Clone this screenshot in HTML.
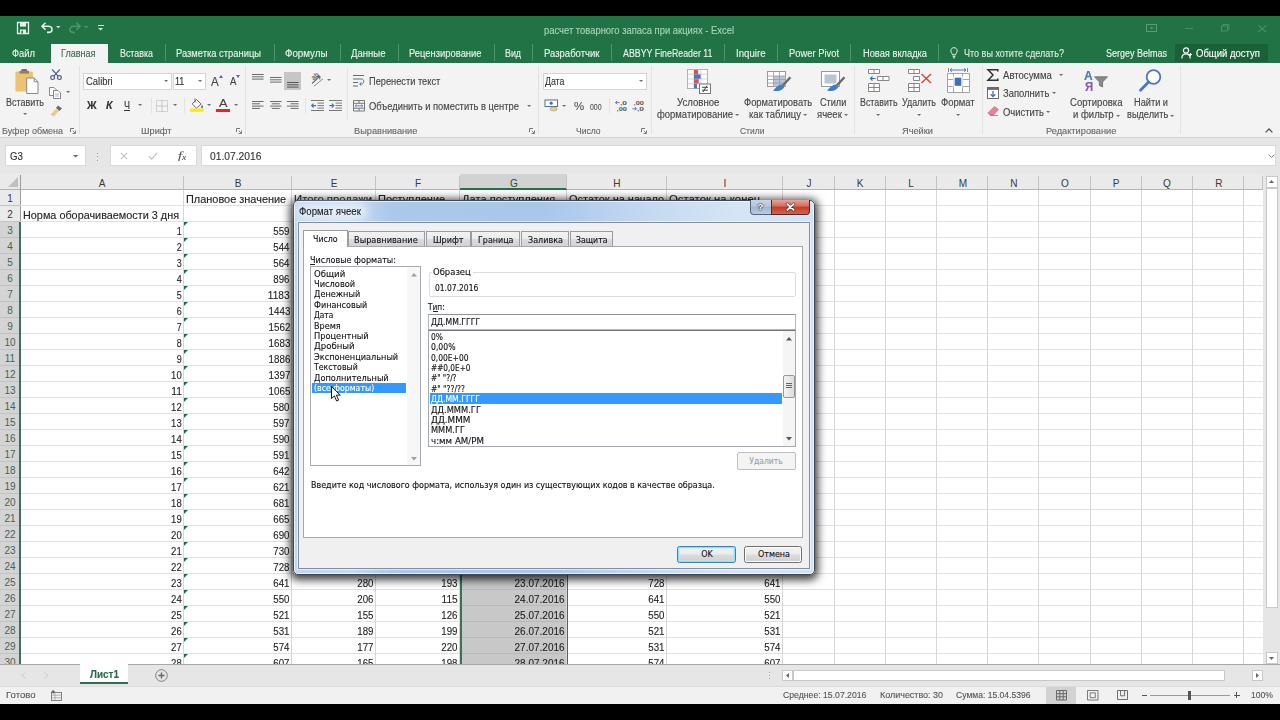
<!DOCTYPE html>
<html lang="ru"><head><meta charset="utf-8"><title>Excel</title>
<style>
*{box-sizing:border-box;margin:0;padding:0}
html,body{width:1280px;height:720px;overflow:hidden;background:#000}
body{font-family:"Liberation Sans",sans-serif;position:relative}
.a{position:absolute}
.t{position:absolute;white-space:nowrap;display:block;-webkit-text-stroke:.12px currentColor}
svg{position:absolute;overflow:visible}
</style></head>
<body>
<div class="a" style="left:0px;top:16px;width:1280px;height:47px;background:#217346"></div>
<svg style="left:17px;top:22px;" width="12" height="12" viewBox="0 0 12 12"><path d="M0.5 0.5H11.5V11.5H0.5Z" fill="none" stroke="#e4f0e8" stroke-width="1.3"/><rect x="3" y="1" width="6" height="3.6" fill="#e4f0e8"/><rect x="3" y="7.5" width="6" height="4" fill="#e4f0e8"/><rect x="4.4" y="8.8" width="1.6" height="2.6" fill="#217346"/></svg>
<svg style="left:41px;top:22px;" width="12" height="11" viewBox="0 0 12 11"><path d="M4.5 0.8L1 4.2L4.5 7.6M1.2 4.2H7.2C9.6 4.2 11 5.6 11 7.4C11 9.3 9.6 10.4 7.6 10.4H6" fill="none" stroke="#e4f0e8" stroke-width="1.6"/></svg>
<svg style="left:56.3px;top:26.4px;" width="4.4" height="2.2" viewBox="0 0 4.4 2.2"><path d="M0 0H4.4L2.2 2.2Z" fill="#d5e6da"/></svg>
<svg style="left:69px;top:22px;" width="12" height="11" viewBox="0 0 12 11"><path d="M7.5 0.8L11 4.2L7.5 7.6M10.8 4.2H4.8C2.4 4.2 1 5.6 1 7.4C1 9.3 2.4 10.4 4.4 10.4H6" fill="none" stroke="#4f9470" stroke-width="1.5"/></svg>
<svg style="left:83.8px;top:26.4px;" width="4.4" height="2.2" viewBox="0 0 4.4 2.2"><path d="M0 0H4.4L2.2 2.2Z" fill="#4f9470"/></svg>
<div class="a" style="left:98px;top:25px;width:6px;height:1px;background:#d5e6da"></div>
<svg style="left:98.4px;top:28.2px;" width="5.2" height="2.6" viewBox="0 0 5.2 2.6"><path d="M0 0H5.2L2.6 2.6Z" fill="#d5e6da"/></svg>
<span class="t" style="font-size:10px;color:#a9d3ba;line-height:14px;top:23.5px;left:544px;transform-origin:0 50%;transform:scaleX(0.9414);">расчет товарного запаса при акциях - Excel</span>
<svg style="left:1145.5px;top:24px;" width="11" height="8" viewBox="0 0 11 8"><rect x="0.5" y="0.5" width="10" height="7" fill="none" stroke="#5a9a78"/><path d="M5.5 2.6L7.4 4.8H3.6Z" fill="#5a9a78"/></svg>
<div class="a" style="left:1184.5px;top:28px;width:8px;height:1px;background:#4a8c69"></div>
<svg style="left:1221px;top:24px;" width="8.5" height="7.5" viewBox="0 0 8.5 7.5"><rect x="0.5" y="2" width="6" height="5" fill="none" stroke="#4b8d6a"/><path d="M2 2V0.5H8V5.5H6.5" fill="none" stroke="#4b8d6a"/></svg>
<svg style="left:1257.5px;top:24.5px;" width="8.5" height="7.5" viewBox="0 0 8.5 7.5"><path d="M0.5 0.5L8 7M8 0.5L0.5 7" stroke="#4b8d6a" stroke-width="1.1"/></svg>
<div class="a" style="left:50.5px;top:44px;width:57.5px;height:19px;background:#f3f3f3"></div>
<span class="t" style="font-size:10px;color:#e9f3ec;line-height:14px;top:47.0px;left:12px;transform-origin:0 50%;transform:scaleX(0.9352);">Файл</span>
<span class="t" style="font-size:10px;color:#3c6b52;line-height:14px;top:47.0px;left:61px;transform-origin:0 50%;transform:scaleX(0.9064);">Главная</span>
<span class="t" style="font-size:10px;color:#e9f3ec;line-height:14px;top:47.0px;left:119.5px;transform-origin:0 50%;transform:scaleX(0.8878);">Вставка</span>
<span class="t" style="font-size:10px;color:#e9f3ec;line-height:14px;top:47.0px;left:176px;transform-origin:0 50%;transform:scaleX(0.9370);">Разметка страницы</span>
<span class="t" style="font-size:10px;color:#e9f3ec;line-height:14px;top:47.0px;left:285px;transform-origin:0 50%;transform:scaleX(0.9767);">Формулы</span>
<span class="t" style="font-size:10px;color:#e9f3ec;line-height:14px;top:47.0px;left:351px;transform-origin:0 50%;transform:scaleX(0.9546);">Данные</span>
<span class="t" style="font-size:10px;color:#e9f3ec;line-height:14px;top:47.0px;left:409px;transform-origin:0 50%;transform:scaleX(0.9389);">Рецензирование</span>
<span class="t" style="font-size:10px;color:#e9f3ec;line-height:14px;top:47.0px;left:505px;transform-origin:0 50%;transform:scaleX(0.8843);">Вид</span>
<span class="t" style="font-size:10px;color:#e9f3ec;line-height:14px;top:47.0px;left:544px;transform-origin:0 50%;transform:scaleX(0.9515);">Разработчик</span>
<span class="t" style="font-size:10px;color:#e9f3ec;line-height:14px;top:47.0px;left:622.5px;transform-origin:0 50%;transform:scaleX(0.8830);">ABBYY FineReader 11</span>
<span class="t" style="font-size:10px;color:#e9f3ec;line-height:14px;top:47.0px;left:736px;transform-origin:0 50%;transform:scaleX(0.9647);">Inquire</span>
<span class="t" style="font-size:10px;color:#e9f3ec;line-height:14px;top:47.0px;left:789px;transform-origin:0 50%;transform:scaleX(0.9370);">Power Pivot</span>
<span class="t" style="font-size:10px;color:#e9f3ec;line-height:14px;top:47.0px;left:862.5px;transform-origin:0 50%;transform:scaleX(0.9284);">Новая вкладка</span>
<div class="a" style="left:165px;top:44px;width:1px;height:17px;background:#4f9470"></div>
<div class="a" style="left:273.5px;top:44px;width:1px;height:17px;background:#4f9470"></div>
<div class="a" style="left:340px;top:44px;width:1px;height:17px;background:#4f9470"></div>
<div class="a" style="left:397.5px;top:44px;width:1px;height:17px;background:#4f9470"></div>
<div class="a" style="left:493.5px;top:44px;width:1px;height:17px;background:#4f9470"></div>
<div class="a" style="left:531.5px;top:44px;width:1px;height:17px;background:#4f9470"></div>
<div class="a" style="left:611px;top:44px;width:1px;height:17px;background:#4f9470"></div>
<div class="a" style="left:724px;top:44px;width:1px;height:17px;background:#4f9470"></div>
<div class="a" style="left:776.5px;top:44px;width:1px;height:17px;background:#4f9470"></div>
<div class="a" style="left:850px;top:44px;width:1px;height:17px;background:#4f9470"></div>
<div class="a" style="left:938px;top:44px;width:1px;height:17px;background:#4f9470"></div>
<svg style="left:950px;top:47px;" width="8" height="12" viewBox="0 0 8 12"><path d="M4 0.7C1.9 0.7 0.8 2.2 0.8 3.8C0.8 5.4 2.2 6.2 2.4 7.8H5.6C5.8 6.2 7.2 5.4 7.2 3.8C7.2 2.2 6.1 0.7 4 0.7Z" fill="none" stroke="#e9f3ec" stroke-width="1"/><path d="M2.6 9.3H5.4M3 10.8H5" stroke="#e9f3ec" stroke-width="1"/></svg>
<span class="t" style="font-size:10px;color:#dbeade;line-height:14px;top:46.5px;left:964px;transform-origin:0 50%;transform:scaleX(0.9046);">Что вы хотите сделать?</span>
<span class="t" style="font-size:10px;color:#eef6f0;line-height:14px;top:46.5px;left:1106px;transform-origin:0 50%;transform:scaleX(0.8995);">Sergey Belmas</span>
<div class="a" style="left:1175px;top:44px;width:93px;height:18px;background:#1a6039"></div>
<svg style="left:1181px;top:47px;" width="11" height="12" viewBox="0 0 11 12"><circle cx="5" cy="3.4" r="2.6" fill="none" stroke="#fff" stroke-width="1.2"/><path d="M0.8 11.5C0.8 8.4 2.6 6.8 5 6.8C7.4 6.8 9.2 8.4 9.2 11.5" fill="none" stroke="#fff" stroke-width="1.2"/><path d="M8 7.5H11M9.5 6V9" stroke="#fff" stroke-width="1"/></svg>
<span class="t" style="font-size:10px;color:#fff;line-height:14px;top:46.5px;left:1196px;transform-origin:0 50%;transform:scaleX(0.9526);">Общий доступ</span>
<div class="a" style="left:0px;top:63px;width:1280px;height:74px;background:#f3f3f3"></div>
<div class="a" style="left:0px;top:137px;width:1280px;height:1px;background:#d2d2d2"></div>
<div class="a" style="left:79px;top:66px;width:1px;height:68px;background:#e2e2e2"></div>
<div class="a" style="left:244.5px;top:66px;width:1px;height:68px;background:#e2e2e2"></div>
<div class="a" style="left:537.5px;top:66px;width:1px;height:68px;background:#e2e2e2"></div>
<div class="a" style="left:650.5px;top:66px;width:1px;height:68px;background:#e2e2e2"></div>
<div class="a" style="left:853.5px;top:66px;width:1px;height:68px;background:#e2e2e2"></div>
<div class="a" style="left:981.5px;top:66px;width:1px;height:68px;background:#e2e2e2"></div>
<div class="a" style="left:1180px;top:66px;width:1px;height:68px;background:#e2e2e2"></div>
<div class="a" style="left:347px;top:68px;width:1px;height:52px;background:#e2e2e2"></div>
<div class="a" style="left:150.5px;top:98px;width:1px;height:15px;background:#e2e2e2"></div>
<div class="a" style="left:184px;top:98px;width:1px;height:15px;background:#e2e2e2"></div>
<div class="a" style="left:305px;top:98px;width:1px;height:15px;background:#e2e2e2"></div>
<div class="a" style="left:608.5px;top:98px;width:1px;height:15px;background:#e2e2e2"></div>
<svg style="left:15px;top:69px;" width="24" height="25" viewBox="0 0 24 25"><rect x="0.4" y="2.6" width="17.6" height="20" rx="1" fill="#ecc373"/><rect x="6.2" y="0" width="6" height="3" rx="1.2" fill="#7a705e"/><rect x="4.4" y="1.8" width="9.6" height="2.8" fill="#8f8268"/>
<path d="M11.7 9H19.2L23 12.8V24.5H11.7Z" fill="#fff" stroke="#7d7d7d" stroke-width="0.9"/><path d="M19.2 9V12.8H23" fill="none" stroke="#7d7d7d" stroke-width="0.9"/></svg>
<span class="t" style="font-size:10px;color:#444;line-height:14px;top:95.7px;left:5.7px;transform-origin:0 50%;transform:scaleX(0.8964);">Вставить</span>
<svg style="left:22.9px;top:113.45px;" width="4.2" height="2.1" viewBox="0 0 4.2 2.1"><path d="M0 0H4.2L2.1 2.1Z" fill="#707070"/></svg>
<svg style="left:49.5px;top:69px;" width="12" height="11" viewBox="0 0 12 11"><path d="M2.2 0.5L8 7.2M9.8 0.5L4 7.2" stroke="#55618f" stroke-width="1.2" fill="none"/><circle cx="2.6" cy="8.6" r="1.9" fill="none" stroke="#55618f" stroke-width="1.2"/><circle cx="9.4" cy="8.6" r="1.9" fill="none" stroke="#55618f" stroke-width="1.2"/></svg>
<svg style="left:49px;top:87px;" width="12" height="12" viewBox="0 0 12 12"><path d="M0.5 0.5H5L7 2.5V8.5H0.5Z" fill="#fff" stroke="#7a7a7a" stroke-width="0.9"/><path d="M4.5 3.5H9L11.5 6V11.5H4.5Z" fill="#fff" stroke="#7a7a7a" stroke-width="0.9"/><path d="M6 7H10M6 9H10" stroke="#8fa3c8" stroke-width="0.8"/></svg>
<svg style="left:66.4px;top:91.45px;" width="4.2" height="2.1" viewBox="0 0 4.2 2.1"><path d="M0 0H4.2L2.1 2.1Z" fill="#707070"/></svg>
<svg style="left:50px;top:105px;" width="13" height="12" viewBox="0 0 13 12"><path d="M8 0.5L12 3.5L9.5 6L6 3Z" fill="#6b6b6b"/><path d="M6.5 3.5L9 5.8L4 11.5L0.5 9.5Z" fill="#e9c98c"/></svg>
<span class="t" style="font-size:9.5px;color:#666;line-height:14px;top:123.7px;left:2.4px;transform-origin:0 50%;transform:scaleX(0.9448);">Буфер обмена</span>
<svg style="left:70px;top:128px;" width="6" height="6" viewBox="0 0 6 6"><path d="M0.5 4V0.5H4" fill="none" stroke="#777"/><path d="M5.5 2.5V5.5H2.5M5.5 5.5L2.8 2.8" fill="none" stroke="#777" stroke-width="0.9"/></svg>
<div class="a" style="left:83.3px;top:72.6px;width:88.4px;height:17px;background:#fff;border:1px solid #d4d4d4"></div>
<div class="a" style="left:172.8px;top:72.6px;width:33.5px;height:17px;background:#fff;border:1px solid #d4d4d4"></div>
<span class="t" style="font-size:10.5px;color:#333;line-height:14px;top:74.3px;left:85.7px;transform-origin:0 50%;transform:scaleX(0.8970);">Calibri</span>
<svg style="left:163.9px;top:80.45px;" width="4.2" height="2.1" viewBox="0 0 4.2 2.1"><path d="M0 0H4.2L2.1 2.1Z" fill="#707070"/></svg>
<span class="t" style="font-size:10.5px;color:#333;line-height:14px;top:74.3px;left:174.7px;transform-origin:0 50%;transform:scaleX(0.8527);">11</span>
<svg style="left:197.9px;top:80.45px;" width="4.2" height="2.1" viewBox="0 0 4.2 2.1"><path d="M0 0H4.2L2.1 2.1Z" fill="#707070"/></svg>
<span class="t" style="font-size:12px;color:#444;line-height:16px;top:73.6px;left:211.3px;transform-origin:0 50%;transform:scaleX(0.9606);">A</span>
<svg style="left:218.5px;top:74.5px;" width="4" height="3" viewBox="0 0 4 3"><path d="M0 3L2 0L4 3Z" fill="#4a69a8"/></svg>
<span class="t" style="font-size:10px;color:#444;line-height:14px;top:75.2px;left:229.6px;transform-origin:0 50%;transform:scaleX(0.9593);">A</span>
<svg style="left:235.5px;top:75px;" width="4" height="3" viewBox="0 0 4 3"><path d="M0 0L2 3L4 0Z" fill="#4a69a8"/></svg>
<span class="t" style="font-size:10.5px;color:#333;font-weight:bold;line-height:14px;top:98.0px;left:87.4px;transform-origin:0 50%;transform:scaleX(1.0105);">Ж</span>
<span class="t" style="font-size:10.5px;color:#333;font-weight:bold;font-style:italic;line-height:14px;top:98.0px;left:105.7px;transform-origin:0 50%;transform:scaleX(1.0048);">К</span>
<span class="t" style="font-size:10.5px;color:#333;text-decoration:underline;line-height:14px;top:97.6px;left:124px;transform-origin:0 50%;transform:scaleX(0.8571);">Ч</span>
<svg style="left:137.9px;top:104.45px;" width="4.2" height="2.1" viewBox="0 0 4.2 2.1"><path d="M0 0H4.2L2.1 2.1Z" fill="#707070"/></svg>
<svg style="left:155.5px;top:99.5px;" width="12" height="12" viewBox="0 0 12 12"><path d="M0.5 0.5H11.5V11.5H0.5Z" fill="none" stroke="#b5b5b5" stroke-dasharray="1 1"/><path d="M6 0.5V11.5M0.5 6H11.5" stroke="#9a9a9a" stroke-width="0.9" stroke-dasharray="1 1"/></svg>
<svg style="left:172.9px;top:104.45px;" width="4.2" height="2.1" viewBox="0 0 4.2 2.1"><path d="M0 0H4.2L2.1 2.1Z" fill="#707070"/></svg>
<svg style="left:190px;top:98px;" width="14" height="14" viewBox="0 0 14 14"><path d="M6.5 1.5L11 6L6.5 10.2L2.2 6Z" fill="#fdfdfd" stroke="#6a6a6a" stroke-width="1"/><path d="M5 0.5V4.5" stroke="#6a6a6a" stroke-width="1"/><path d="M12 6.5C12.9 8 13.2 8.6 13.2 9.2A1.1 1.1 0 0 1 11 9.2C11 8.6 11.3 8 12 6.5Z" fill="#5f7fb5"/><rect x="0" y="10.6" width="13.5" height="3.2" fill="#ffe900"/></svg>
<svg style="left:207.20000000000002px;top:104.45px;" width="4.2" height="2.1" viewBox="0 0 4.2 2.1"><path d="M0 0H4.2L2.1 2.1Z" fill="#707070"/></svg>
<span class="t" style="font-size:10.5px;color:#444;line-height:14px;top:96.2px;left:219px;transform-origin:0 50%;transform:scaleX(1.2116);">A</span>
<div class="a" style="left:216.4px;top:108.6px;width:13.2px;height:3.2px;background:#e8242a"></div>
<svg style="left:234.20000000000002px;top:104.45px;" width="4.2" height="2.1" viewBox="0 0 4.2 2.1"><path d="M0 0H4.2L2.1 2.1Z" fill="#707070"/></svg>
<span class="t" style="font-size:9.5px;color:#666;line-height:14px;top:123.7px;left:140.8px;transform-origin:0 50%;transform:scaleX(0.9755);">Шрифт</span>
<svg style="left:235.7px;top:128px;" width="6" height="6" viewBox="0 0 6 6"><path d="M0.5 4V0.5H4" fill="none" stroke="#777"/><path d="M5.5 2.5V5.5H2.5M5.5 5.5L2.8 2.8" fill="none" stroke="#777" stroke-width="0.9"/></svg>
<svg style="left:251.8px;top:73.8px;" width="11.6" height="6.8999999999999995" viewBox="0 0 11.6 6.8999999999999995"><rect x="0.0" y="0.0" width="11.6" height="1" fill="#6b6b6b"/><rect x="0.0" y="2.3" width="11.6" height="1" fill="#6b6b6b"/><rect x="0.0" y="4.6" width="11.6" height="1" fill="#6b6b6b"/></svg>
<svg style="left:269.5px;top:77.3px;" width="11.6" height="6.8999999999999995" viewBox="0 0 11.6 6.8999999999999995"><rect x="0.0" y="0.0" width="11.6" height="1" fill="#6b6b6b"/><rect x="0.0" y="2.3" width="11.6" height="1" fill="#6b6b6b"/><rect x="0.0" y="4.6" width="11.6" height="1" fill="#6b6b6b"/></svg>
<div class="a" style="left:284.3px;top:72.2px;width:16.7px;height:17.8px;background:#c6c6c6"></div>
<svg style="left:287px;top:81.6px;" width="11.6" height="6.8999999999999995" viewBox="0 0 11.6 6.8999999999999995"><rect x="0.0" y="0.0" width="11.6" height="1" fill="#555"/><rect x="0.0" y="2.3" width="11.6" height="1" fill="#555"/><rect x="0.0" y="4.6" width="11.6" height="1" fill="#555"/></svg>
<svg style="left:311px;top:73.5px;" width="13" height="13" viewBox="0 0 13 13"><path d="M1 9.5L9 2M9 2L5.6 2.4M9 2L8.7 5.4" stroke="#6a6a6a" stroke-width="1.1" fill="none"/><path d="M3 12.2L12 4.8" stroke="#8a8a8a" stroke-width="1"/></svg>
<span class="t" style="font-size:7px;color:#555;transform:rotate(-40deg);line-height:11px;top:73.0px;left:311.5px;transform-origin:0 50%;">ab</span>
<svg style="left:326.7px;top:79.45px;" width="4.2" height="2.1" viewBox="0 0 4.2 2.1"><path d="M0 0H4.2L2.1 2.1Z" fill="#707070"/></svg>
<svg style="left:251.8px;top:100.8px;" width="11.6" height="9.2" viewBox="0 0 11.6 9.2"><rect x="0.0" y="0.0" width="11.6" height="1" fill="#6b6b6b"/><rect x="0.0" y="2.3" width="8" height="1" fill="#6b6b6b"/><rect x="0.0" y="4.6" width="11.6" height="1" fill="#6b6b6b"/><rect x="0.0" y="6.9" width="8" height="1" fill="#6b6b6b"/></svg>
<svg style="left:269.5px;top:100.8px;" width="11.6" height="9.2" viewBox="0 0 11.6 9.2"><rect x="0.0" y="0.0" width="11.6" height="1" fill="#6b6b6b"/><rect x="1.8" y="2.3" width="8" height="1" fill="#6b6b6b"/><rect x="0.0" y="4.6" width="11.6" height="1" fill="#6b6b6b"/><rect x="1.8" y="6.9" width="8" height="1" fill="#6b6b6b"/></svg>
<svg style="left:287.4px;top:100.8px;" width="11.6" height="9.2" viewBox="0 0 11.6 9.2"><rect x="0.0" y="0.0" width="11.6" height="1" fill="#6b6b6b"/><rect x="3.6" y="2.3" width="8" height="1" fill="#6b6b6b"/><rect x="0.0" y="4.6" width="11.6" height="1" fill="#6b6b6b"/><rect x="3.6" y="6.9" width="8" height="1" fill="#6b6b6b"/></svg>
<svg style="left:311px;top:100px;" width="13" height="11" viewBox="0 0 13 11"><path d="M0 0.5H13M6.5 3.1H13M6.5 5.6H13M6.5 8.1H13M0 10.5H13" stroke="#6b6b6b" stroke-width="0.9"/><path d="M5 5.6H0.8M2.6 3.6L0.6 5.6L2.6 7.6" stroke="#3f6fb8" stroke-width="1.1" fill="none"/></svg>
<svg style="left:329px;top:100px;" width="13" height="11" viewBox="0 0 13 11"><path d="M0 0.5H13M6.5 3.1H13M6.5 5.6H13M6.5 8.1H13M0 10.5H13" stroke="#6b6b6b" stroke-width="0.9"/><path d="M0.4 5.6H4.6M2.8 3.6L4.8 5.6L2.8 7.6" stroke="#3f6fb8" stroke-width="1.1" fill="none"/></svg>
<svg style="left:353.4px;top:75px;" width="12" height="12" viewBox="0 0 12 12"><path d="M0 0.5H11M0 4H8.5M0 7.5H5M0 11H5" stroke="#6b6b6b" stroke-width="1"/><path d="M8.5 4C11.5 4 11.5 9 8.5 9H7M8.4 7.4L6.6 9L8.4 10.6" stroke="#3f6fb8" stroke-width="1" fill="none"/></svg>
<span class="t" style="font-size:10px;color:#444;line-height:14px;top:75.1px;left:369.4px;transform-origin:0 50%;transform:scaleX(0.9260);">Перенести текст</span>
<svg style="left:353.4px;top:99.6px;" width="12" height="11.5" viewBox="0 0 12 11.5"><path d="M0.5 0.5H11.5V11H0.5ZM0.5 3.3H11.5M0.5 8.2H11.5M6 0.5V3.3M6 8.2V11" fill="none" stroke="#6b6b6b" stroke-width="0.9"/><path d="M2.2 5.8H9.8M3.6 4.6L2.2 5.8L3.6 7M8.4 4.6L9.8 5.8L8.4 7" stroke="#3f6fb8" stroke-width="0.8" fill="none"/></svg>
<span class="t" style="font-size:10px;color:#444;line-height:14px;top:100.0px;left:369.4px;transform-origin:0 50%;transform:scaleX(0.9376);">Объединить и поместить в центре</span>
<svg style="left:526.9px;top:105.45px;" width="4.2" height="2.1" viewBox="0 0 4.2 2.1"><path d="M0 0H4.2L2.1 2.1Z" fill="#707070"/></svg>
<span class="t" style="font-size:9.5px;color:#666;line-height:14px;top:123.7px;left:353.8px;transform-origin:0 50%;transform:scaleX(0.9693);">Выравнивание</span>
<svg style="left:529px;top:128px;" width="6" height="6" viewBox="0 0 6 6"><path d="M0.5 4V0.5H4" fill="none" stroke="#777"/><path d="M5.5 2.5V5.5H2.5M5.5 5.5L2.8 2.8" fill="none" stroke="#777" stroke-width="0.9"/></svg>
<div class="a" style="left:542.7px;top:72.6px;width:104px;height:17px;background:#fff;border:1px solid #d4d4d4"></div>
<span class="t" style="font-size:10.5px;color:#333;line-height:14px;top:74.3px;left:545px;transform-origin:0 50%;transform:scaleX(0.8338);">Дата</span>
<svg style="left:638.6999999999999px;top:80.45px;" width="4.2" height="2.1" viewBox="0 0 4.2 2.1"><path d="M0 0H4.2L2.1 2.1Z" fill="#707070"/></svg>
<svg style="left:545px;top:99.6px;" width="13" height="11.5" viewBox="0 0 13 11.5"><rect x="0" y="0" width="12.5" height="6.5" fill="#fff" stroke="#4a6fa8" stroke-width="1"/><circle cx="6.2" cy="3.2" r="1.6" fill="#4a6fa8"/><ellipse cx="8.6" cy="9" rx="3.6" ry="2" fill="#e9c98c" stroke="#b79a5c" stroke-width="0.6"/></svg>
<svg style="left:562.3px;top:105.45px;" width="4.2" height="2.1" viewBox="0 0 4.2 2.1"><path d="M0 0H4.2L2.1 2.1Z" fill="#707070"/></svg>
<span class="t" style="font-size:11.5px;color:#555;line-height:16px;top:98.1px;left:573.5px;transform-origin:0 50%;transform:scaleX(0.9966);">%</span>
<span class="t" style="font-size:8.5px;color:#555;line-height:12px;top:100.6px;left:590px;transform-origin:0 50%;transform:scaleX(0.8176);">000</span>
<svg style="left:614.8px;top:100px;" width="12" height="12" viewBox="0 0 12 12"><text x="5" y="5" font-size="6.2" font-weight="bold" fill="#555" font-family="Liberation Sans, sans-serif" textLength="7" lengthAdjust="spacingAndGlyphs">,0</text><text x="1.6" y="11.3" font-size="6.2" font-weight="bold" fill="#555" font-family="Liberation Sans, sans-serif" textLength="10.4" lengthAdjust="spacingAndGlyphs">,00</text><path d="M4.6 2.6H0.6M2.2 0.9L0.5 2.6L2.2 4.3" stroke="#3f6fb8" stroke-width="0.9" fill="none"/></svg>
<svg style="left:632px;top:100px;" width="12" height="12" viewBox="0 0 12 12"><text x="1.6" y="5" font-size="6.2" font-weight="bold" fill="#555" font-family="Liberation Sans, sans-serif" textLength="10.4" lengthAdjust="spacingAndGlyphs">,00</text><text x="5" y="11.3" font-size="6.2" font-weight="bold" fill="#555" font-family="Liberation Sans, sans-serif" textLength="7" lengthAdjust="spacingAndGlyphs">,0</text><path d="M0.4 8.8H4.4M2.8 7.1L4.5 8.8L2.8 10.5" stroke="#3f6fb8" stroke-width="0.9" fill="none"/></svg>
<span class="t" style="font-size:9.5px;color:#666;line-height:14px;top:123.7px;left:575.6px;transform-origin:0 50%;transform:scaleX(0.9002);">Число</span>
<svg style="left:641.3px;top:128px;" width="6" height="6" viewBox="0 0 6 6"><path d="M0.5 4V0.5H4" fill="none" stroke="#777"/><path d="M5.5 2.5V5.5H2.5M5.5 5.5L2.8 2.8" fill="none" stroke="#777" stroke-width="0.9"/></svg>
<svg style="left:686.5px;top:69px;" width="24" height="25" viewBox="0 0 24 25"><rect x="0.5" y="0.5" width="20" height="19" fill="#fff" stroke="#b0b0b0"/><path d="M0.5 5.2H20.5M0.5 10H20.5M0.5 14.8H20.5M7 0.5V19.5M13.8 0.5V19.5" stroke="#c8c8c8" stroke-width="0.8"/>
<rect x="7" y="1" width="4.2" height="4.2" fill="#d9534f"/><rect x="7" y="5.4" width="6.6" height="4.4" fill="#4a78b8"/><rect x="7" y="10.2" width="4.8" height="4.4" fill="#d9534f"/><rect x="7" y="15" width="3" height="4.4" fill="#4a78b8"/>
<rect x="12.5" y="15" width="11" height="9.5" fill="#fff" stroke="#777"/><path d="M15 18.3H21M15 21.2H21M20 16.6L16 23" stroke="#444" stroke-width="1"/></svg>
<span class="t" style="font-size:10px;color:#444;line-height:14px;top:95.7px;left:677px;transform-origin:0 50%;transform:scaleX(0.9602);">Условное</span>
<span class="t" style="font-size:10px;color:#444;line-height:14px;top:107.9px;left:656.5px;transform-origin:0 50%;transform:scaleX(0.9477);">форматирование</span>
<svg style="left:734.6px;top:114.45px;" width="4.2" height="2.1" viewBox="0 0 4.2 2.1"><path d="M0 0H4.2L2.1 2.1Z" fill="#707070"/></svg>
<svg style="left:767.4px;top:69px;" width="25" height="25" viewBox="0 0 25 25"><rect x="0.5" y="2.5" width="18" height="15" fill="#fff" stroke="#9a9a9a"/><rect x="6.5" y="7" width="12" height="10.5" fill="#b9c4d4"/><path d="M0.5 7H18.5M0.5 10.5H18.5M0.5 14H18.5M6.5 2.5V17.5M12.5 2.5V17.5" stroke="#9a9a9a" stroke-width="0.8"/>
<path d="M22.5 7.5L24.3 9L17 17L15 15.5Z" fill="#6b6b6b"/><path d="M15.5 15.5C11 15 8.5 19.5 6 21.5C11 23 16.5 21.5 17.5 17Z" fill="#3f7fc1"/></svg>
<span class="t" style="font-size:10px;color:#444;line-height:14px;top:95.7px;left:744px;transform-origin:0 50%;transform:scaleX(0.9397);">Форматировать</span>
<span class="t" style="font-size:10px;color:#444;line-height:14px;top:107.9px;left:749px;transform-origin:0 50%;transform:scaleX(0.9495);">как таблицу</span>
<svg style="left:803.3px;top:114.45px;" width="4.2" height="2.1" viewBox="0 0 4.2 2.1"><path d="M0 0H4.2L2.1 2.1Z" fill="#707070"/></svg>
<svg style="left:821.3px;top:69px;" width="25" height="25" viewBox="0 0 25 25"><rect x="0.5" y="2.5" width="18" height="15" fill="#fff" stroke="#9a9a9a"/><rect x="3.5" y="5.5" width="12" height="9" fill="#b9c4d4"/>
<path d="M22.5 7.5L24.3 9L17 17L15 15.5Z" fill="#6b6b6b"/><path d="M15.5 15.5C11 15 8.5 19.5 6 21.5C11 23 16.5 21.5 17.5 17Z" fill="#3f7fc1"/></svg>
<span class="t" style="font-size:10px;color:#444;line-height:14px;top:95.7px;left:819.7px;transform-origin:0 50%;transform:scaleX(0.9128);">Стили</span>
<span class="t" style="font-size:10px;color:#444;line-height:14px;top:107.9px;left:816.8px;transform-origin:0 50%;transform:scaleX(0.9493);">ячеек</span>
<svg style="left:843.6px;top:114.45px;" width="4.2" height="2.1" viewBox="0 0 4.2 2.1"><path d="M0 0H4.2L2.1 2.1Z" fill="#707070"/></svg>
<span class="t" style="font-size:9.5px;color:#666;line-height:14px;top:123.7px;left:740px;transform-origin:0 50%;transform:scaleX(0.8913);">Стили</span>
<svg style="left:867.6px;top:69px;" width="22" height="23" viewBox="0 0 22 23"><path d="M0.5 0.5H11.5V4.5H0.5ZM6 0.5V4.5M9.5 7.5H21V11.5H9.5ZM15 7.5V11.5M0.5 14.5H11.5V22.5H0.5ZM6 14.5V22.5M0.5 18.5H11.5" fill="#fff" stroke="#7a7a7a" stroke-width="0.9"/><path d="M7.5 9.5H2.5M4.5 7.5L2.5 9.5L4.5 11.5" stroke="#3f6fb8" stroke-width="1.2" fill="none"/></svg>
<span class="t" style="font-size:10px;color:#444;line-height:14px;top:95.7px;left:859.5px;transform-origin:0 50%;transform:scaleX(0.8846);">Вставить</span>
<svg style="left:875.9px;top:113.95px;" width="4.2" height="2.1" viewBox="0 0 4.2 2.1"><path d="M0 0H4.2L2.1 2.1Z" fill="#707070"/></svg>
<svg style="left:908px;top:69px;" width="24" height="23" viewBox="0 0 24 23"><path d="M0.5 0.5H11.5V4.5H0.5ZM6 0.5V4.5M5.5 7.5H11.5V11.5H5.5ZM0.5 14.5H11.5V22.5H0.5ZM6 14.5V22.5M0.5 18.5H11.5" fill="#fff" stroke="#7a7a7a" stroke-width="0.9"/><path d="M13.5 5L23 14M23 5L13.5 14" stroke="#d9453c" stroke-width="1.5" fill="none"/></svg>
<span class="t" style="font-size:10px;color:#444;line-height:14px;top:95.7px;left:902px;transform-origin:0 50%;transform:scaleX(0.8903);">Удалить</span>
<svg style="left:916.6999999999999px;top:113.95px;" width="4.2" height="2.1" viewBox="0 0 4.2 2.1"><path d="M0 0H4.2L2.1 2.1Z" fill="#707070"/></svg>
<svg style="left:947px;top:68px;" width="23" height="25" viewBox="0 0 23 25"><path d="M0.5 5.5H22.5V24.5H0.5ZM0.5 11.5H22.5M0.5 18.5H22.5M6.5 5.5V24.5M15.5 5.5V24.5" fill="#fff" stroke="#9a9a9a" stroke-width="0.9"/><rect x="7" y="9" width="8" height="9.5" fill="#3f6fb8" stroke="#fff" stroke-width="1.4"/><path d="M3 2H19M5 0.3L3 2L5 3.7M17 0.3L19 2L17 3.7" stroke="#3f6fb8" stroke-width="0.9" fill="none"/><path d="M1.5 0V4M20.5 0V4" stroke="#7a7a7a" stroke-width="0.9"/></svg>
<span class="t" style="font-size:10px;color:#444;line-height:14px;top:95.7px;left:941px;transform-origin:0 50%;transform:scaleX(0.9485);">Формат</span>
<svg style="left:955.6999999999999px;top:113.95px;" width="4.2" height="2.1" viewBox="0 0 4.2 2.1"><path d="M0 0H4.2L2.1 2.1Z" fill="#707070"/></svg>
<span class="t" style="font-size:9.5px;color:#666;line-height:14px;top:123.7px;left:902px;transform-origin:0 50%;transform:scaleX(0.9725);">Ячейки</span>
<svg style="left:987px;top:68.5px;" width="12" height="12" viewBox="0 0 12 12"><path d="M10.8 2.6V0.8H1L6 6L1 11.2H10.8V9.4" fill="none" stroke="#333" stroke-width="1.5"/></svg>
<span class="t" style="font-size:10px;color:#444;line-height:14px;top:69.0px;left:1002.7px;transform-origin:0 50%;transform:scaleX(0.9569);">Автосумма</span>
<svg style="left:1059.4px;top:73.95px;" width="4.2" height="2.1" viewBox="0 0 4.2 2.1"><path d="M0 0H4.2L2.1 2.1Z" fill="#707070"/></svg>
<svg style="left:987px;top:87px;" width="12" height="12" viewBox="0 0 12 12"><rect x="0.5" y="0.5" width="11" height="11" fill="#fff" stroke="#6b6b6b"/><rect x="0.5" y="0.5" width="11" height="2.4" fill="#6b6b6b"/><path d="M6 4V9.5M3.6 7.2L6 9.6L8.4 7.2" stroke="#3f6fb8" stroke-width="1.3" fill="none"/></svg>
<span class="t" style="font-size:10px;color:#444;line-height:14px;top:87.3px;left:1002.7px;transform-origin:0 50%;transform:scaleX(0.9431);">Заполнить</span>
<svg style="left:1051.7px;top:92.45px;" width="4.2" height="2.1" viewBox="0 0 4.2 2.1"><path d="M0 0H4.2L2.1 2.1Z" fill="#707070"/></svg>
<svg style="left:987px;top:106px;" width="12" height="10" viewBox="0 0 12 10"><path d="M7.5 0.5L11.5 3.5L6.5 9H3L0.8 7Z" fill="#e4829a" stroke="#c95f7c" stroke-width="0.6"/><path d="M3 9.5H11" stroke="#c95f7c" stroke-width="0.8"/></svg>
<span class="t" style="font-size:10px;color:#444;line-height:14px;top:105.6px;left:1002.7px;transform-origin:0 50%;transform:scaleX(0.9419);">Очистить</span>
<svg style="left:1045.9px;top:110.95px;" width="4.2" height="2.1" viewBox="0 0 4.2 2.1"><path d="M0 0H4.2L2.1 2.1Z" fill="#707070"/></svg>
<span class="t" style="font-size:12.5px;color:#4a78b8;font-weight:bold;line-height:16px;top:67.5px;left:1084.3px;transform-origin:0 50%;transform:scaleX(0.9633);">А</span>
<span class="t" style="font-size:12.5px;color:#8a5ba8;font-weight:bold;line-height:16px;top:78.8px;left:1084.6px;transform-origin:0 50%;transform:scaleX(0.9127);">Я</span>
<svg style="left:1094px;top:76px;" width="14" height="12" viewBox="0 0 14 12"><path d="M0.5 0.8H13.5L8.6 6V11L5.4 9.4V6Z" fill="#8a8a8a" stroke="#6b6b6b" stroke-width="0.8"/></svg>
<span class="t" style="font-size:10px;color:#444;line-height:14px;top:95.7px;left:1069.8px;transform-origin:0 50%;transform:scaleX(0.9564);">Сортировка</span>
<span class="t" style="font-size:10px;color:#444;line-height:14px;top:108.3px;left:1073px;transform-origin:0 50%;transform:scaleX(0.9532);">и фильтр</span>
<svg style="left:1116.2px;top:114.95px;" width="4.2" height="2.1" viewBox="0 0 4.2 2.1"><path d="M0 0H4.2L2.1 2.1Z" fill="#707070"/></svg>
<svg style="left:1139.4px;top:69.4px;" width="23" height="23" viewBox="0 0 23 23"><circle cx="14.5" cy="8" r="6.8" fill="#fff" stroke="#4a78b8" stroke-width="1.8"/><path d="M9.6 13L1.5 21.2" stroke="#4a78b8" stroke-width="2.8" stroke-linecap="round"/></svg>
<span class="t" style="font-size:10px;color:#444;line-height:14px;top:95.7px;left:1133.5px;transform-origin:0 50%;transform:scaleX(0.9213);">Найти и</span>
<span class="t" style="font-size:10px;color:#444;line-height:14px;top:108.3px;left:1127px;transform-origin:0 50%;transform:scaleX(0.9200);">выделить</span>
<svg style="left:1170.1000000000001px;top:114.95px;" width="4.2" height="2.1" viewBox="0 0 4.2 2.1"><path d="M0 0H4.2L2.1 2.1Z" fill="#707070"/></svg>
<span class="t" style="font-size:9.5px;color:#666;line-height:14px;top:123.5px;left:1045.6px;transform-origin:0 50%;transform:scaleX(0.9727);">Редактирование</span>
<svg style="left:1264.5px;top:128px;" width="8" height="5" viewBox="0 0 8 5"><path d="M0.6 4.4L4 1L7.4 4.4" fill="none" stroke="#555" stroke-width="1.3"/></svg>
<div class="a" style="left:0px;top:138px;width:1280px;height:36px;background:#e6e6e6"></div>
<div class="a" style="left:4.6px;top:145.4px;width:81px;height:20.6px;background:#fff;border:1px solid #d9d9d9"></div>
<span class="t" style="font-size:10px;color:#333;line-height:14px;top:149.8px;left:9.7px;transform-origin:0 50%;transform:scaleX(0.9667);">G3</span>
<svg style="left:73.4px;top:154.7px;" width="5.2" height="2.6" viewBox="0 0 5.2 2.6"><path d="M0 0H5.2L2.6 2.6Z" fill="#666"/></svg>
<div class="a" style="left:97px;top:152.5px;width:1.4px;height:1.4px;background:#9a9a9a"></div>
<div class="a" style="left:97px;top:156px;width:1.4px;height:1.4px;background:#9a9a9a"></div>
<div class="a" style="left:97px;top:159.5px;width:1.4px;height:1.4px;background:#9a9a9a"></div>
<div class="a" style="left:110px;top:145.4px;width:87px;height:20.6px;background:#fff;border:1px solid #d9d9d9"></div>
<svg style="left:120px;top:152px;" width="8" height="8" viewBox="0 0 8 8"><path d="M0.8 0.8L7.2 7.2M7.2 0.8L0.8 7.2" stroke="#c2c2c2" stroke-width="1.1"/></svg>
<svg style="left:148px;top:152px;" width="10" height="8" viewBox="0 0 10 8"><path d="M0.8 4.4L3.6 7.2L9.2 0.8" fill="none" stroke="#c2c2c2" stroke-width="1.2"/></svg>
<span class="t" style="font-size:11px;color:#555;font-style:italic;font-family:'Liberation Serif', serif;line-height:15px;top:148.1px;left:178px;transform-origin:0 50%;transform:scaleX(1.3061);">f</span>
<span class="t" style="font-size:7.5px;color:#555;font-style:italic;font-family:'Liberation Serif', serif;line-height:12px;top:151.6px;left:182px;transform-origin:0 50%;transform:scaleX(1.2860);">x</span>
<div class="a" style="left:200.6px;top:145.4px;width:1075px;height:20.6px;background:#fff;border:1px solid #d9d9d9"></div>
<span class="t" style="font-size:10.5px;color:#333;line-height:14px;top:149.3px;left:209.5px;transform-origin:0 50%;transform:scaleX(0.9798);">01.07.2016</span>
<svg style="left:1267.5px;top:153.5px;" width="7" height="4" viewBox="0 0 7 4"><path d="M0.5 0.5L3.5 3.5L6.5 0.5" fill="none" stroke="#8a8a8a" stroke-width="1"/></svg>
<div class="a" style="left:0px;top:174px;width:1263px;height:490px;background:#fff"></div>
<div class="a" style="left:0px;top:173px;width:1263px;height:17px;background:#eaeaea"></div>
<div class="a" style="left:0px;top:189px;width:1263px;height:1px;background:#b4b4b4"></div>
<div class="a" style="left:460px;top:174px;width:107px;height:15px;background:#d2d2d2"></div>
<div class="a" style="left:460px;top:188px;width:107px;height:2px;background:#217346"></div>
<div class="a" style="left:183px;top:176px;width:1px;height:13px;background:#c4c4c4"></div>
<span class="t" style="font-size:10.5px;color:#3a3a3a;-webkit-text-stroke:0;line-height:14px;top:175.6px;left:102.0px;transform-origin:50% 50%;transform:translateX(-50%) scaleX(0.9600);">A</span>
<div class="a" style="left:291px;top:176px;width:1px;height:13px;background:#c4c4c4"></div>
<span class="t" style="font-size:10.5px;color:#3a3a3a;-webkit-text-stroke:0;line-height:14px;top:175.6px;left:238.0px;transform-origin:50% 50%;transform:translateX(-50%) scaleX(0.9600);">B</span>
<div class="a" style="left:375px;top:176px;width:1px;height:13px;background:#c4c4c4"></div>
<span class="t" style="font-size:10.5px;color:#3a3a3a;-webkit-text-stroke:0;line-height:14px;top:175.6px;left:334.0px;transform-origin:50% 50%;transform:translateX(-50%) scaleX(0.9600);">E</span>
<div class="a" style="left:459px;top:176px;width:1px;height:13px;background:#c4c4c4"></div>
<span class="t" style="font-size:10.5px;color:#3a3a3a;-webkit-text-stroke:0;line-height:14px;top:175.6px;left:418.0px;transform-origin:50% 50%;transform:translateX(-50%) scaleX(0.9600);">F</span>
<div class="a" style="left:566px;top:176px;width:1px;height:13px;background:#c4c4c4"></div>
<span class="t" style="font-size:10.5px;color:#2a4a38;-webkit-text-stroke:0;line-height:14px;top:175.6px;left:513.5px;transform-origin:50% 50%;transform:translateX(-50%) scaleX(0.9600);">G</span>
<div class="a" style="left:666px;top:176px;width:1px;height:13px;background:#c4c4c4"></div>
<span class="t" style="font-size:10.5px;color:#3a3a3a;-webkit-text-stroke:0;line-height:14px;top:175.6px;left:617.0px;transform-origin:50% 50%;transform:translateX(-50%) scaleX(0.9600);">H</span>
<div class="a" style="left:782px;top:176px;width:1px;height:13px;background:#c4c4c4"></div>
<span class="t" style="font-size:10.5px;color:#3a3a3a;-webkit-text-stroke:0;line-height:14px;top:175.6px;left:725.0px;transform-origin:50% 50%;transform:translateX(-50%) scaleX(0.9600);">I</span>
<div class="a" style="left:834px;top:176px;width:1px;height:13px;background:#c4c4c4"></div>
<span class="t" style="font-size:10.5px;color:#3a3a3a;-webkit-text-stroke:0;line-height:14px;top:175.6px;left:808.8px;transform-origin:50% 50%;transform:translateX(-50%) scaleX(0.9600);">J</span>
<div class="a" style="left:885px;top:176px;width:1px;height:13px;background:#c4c4c4"></div>
<span class="t" style="font-size:10.5px;color:#3a3a3a;-webkit-text-stroke:0;line-height:14px;top:175.6px;left:860.2px;transform-origin:50% 50%;transform:translateX(-50%) scaleX(0.9600);">K</span>
<div class="a" style="left:936px;top:176px;width:1px;height:13px;background:#c4c4c4"></div>
<span class="t" style="font-size:10.5px;color:#3a3a3a;-webkit-text-stroke:0;line-height:14px;top:175.6px;left:911.4px;transform-origin:50% 50%;transform:translateX(-50%) scaleX(0.9600);">L</span>
<div class="a" style="left:987px;top:176px;width:1px;height:13px;background:#c4c4c4"></div>
<span class="t" style="font-size:10.5px;color:#3a3a3a;-webkit-text-stroke:0;line-height:14px;top:175.6px;left:962.6px;transform-origin:50% 50%;transform:translateX(-50%) scaleX(0.9600);">M</span>
<div class="a" style="left:1038px;top:176px;width:1px;height:13px;background:#c4c4c4"></div>
<span class="t" style="font-size:10.5px;color:#3a3a3a;-webkit-text-stroke:0;line-height:14px;top:175.6px;left:1013.8000000000001px;transform-origin:50% 50%;transform:translateX(-50%) scaleX(0.9600);">N</span>
<div class="a" style="left:1090px;top:176px;width:1px;height:13px;background:#c4c4c4"></div>
<span class="t" style="font-size:10.5px;color:#3a3a3a;-webkit-text-stroke:0;line-height:14px;top:175.6px;left:1065.0px;transform-origin:50% 50%;transform:translateX(-50%) scaleX(0.9600);">O</span>
<div class="a" style="left:1141px;top:176px;width:1px;height:13px;background:#c4c4c4"></div>
<span class="t" style="font-size:10.5px;color:#3a3a3a;-webkit-text-stroke:0;line-height:14px;top:175.6px;left:1116.1999999999998px;transform-origin:50% 50%;transform:translateX(-50%) scaleX(0.9600);">P</span>
<div class="a" style="left:1192px;top:176px;width:1px;height:13px;background:#c4c4c4"></div>
<span class="t" style="font-size:10.5px;color:#3a3a3a;-webkit-text-stroke:0;line-height:14px;top:175.6px;left:1167.4px;transform-origin:50% 50%;transform:translateX(-50%) scaleX(0.9600);">Q</span>
<div class="a" style="left:1243px;top:176px;width:1px;height:13px;background:#c4c4c4"></div>
<span class="t" style="font-size:10.5px;color:#3a3a3a;-webkit-text-stroke:0;line-height:14px;top:175.6px;left:1218.6px;transform-origin:50% 50%;transform:translateX(-50%) scaleX(0.9600);">R</span>
<div class="a" style="left:1262px;top:176px;width:1px;height:13px;background:#c4c4c4"></div>
<svg style="left:8px;top:177px;" width="10" height="10" viewBox="0 0 10 10"><path d="M10 0V10H0Z" fill="#c0c0c0"/></svg>
<div class="a" style="left:0px;top:190px;width:20px;height:32px;background:#eaeaea"></div>
<div class="a" style="left:0px;top:222px;width:20px;height:442px;background:#d4d4d4"></div>
<div class="a" style="left:20px;top:175px;width:1px;height:47px;background:#9c9c9c"></div>
<div class="a" style="left:460px;top:222px;width:107px;height:442px;background:#c8c8c8"></div>
<div class="a" style="left:20px;top:205px;width:1243px;height:1px;background:#e1e1e1"></div>
<div class="a" style="left:0px;top:205px;width:20px;height:1px;background:#c2c2c2"></div>
<div class="a" style="left:460px;top:205px;width:107px;height:1px;background:#b9b9b9"></div>
<div class="a" style="left:20px;top:221px;width:1243px;height:1px;background:#e1e1e1"></div>
<div class="a" style="left:0px;top:221px;width:20px;height:1px;background:#c2c2c2"></div>
<div class="a" style="left:460px;top:221px;width:107px;height:1px;background:#b9b9b9"></div>
<div class="a" style="left:20px;top:237px;width:1243px;height:1px;background:#e1e1e1"></div>
<div class="a" style="left:0px;top:237px;width:20px;height:1px;background:#c2c2c2"></div>
<div class="a" style="left:460px;top:237px;width:107px;height:1px;background:#b9b9b9"></div>
<div class="a" style="left:20px;top:253px;width:1243px;height:1px;background:#e1e1e1"></div>
<div class="a" style="left:0px;top:253px;width:20px;height:1px;background:#c2c2c2"></div>
<div class="a" style="left:460px;top:253px;width:107px;height:1px;background:#b9b9b9"></div>
<div class="a" style="left:20px;top:269px;width:1243px;height:1px;background:#e1e1e1"></div>
<div class="a" style="left:0px;top:269px;width:20px;height:1px;background:#c2c2c2"></div>
<div class="a" style="left:460px;top:269px;width:107px;height:1px;background:#b9b9b9"></div>
<div class="a" style="left:20px;top:285px;width:1243px;height:1px;background:#e1e1e1"></div>
<div class="a" style="left:0px;top:285px;width:20px;height:1px;background:#c2c2c2"></div>
<div class="a" style="left:460px;top:285px;width:107px;height:1px;background:#b9b9b9"></div>
<div class="a" style="left:20px;top:301px;width:1243px;height:1px;background:#e1e1e1"></div>
<div class="a" style="left:0px;top:301px;width:20px;height:1px;background:#c2c2c2"></div>
<div class="a" style="left:460px;top:301px;width:107px;height:1px;background:#b9b9b9"></div>
<div class="a" style="left:20px;top:317px;width:1243px;height:1px;background:#e1e1e1"></div>
<div class="a" style="left:0px;top:317px;width:20px;height:1px;background:#c2c2c2"></div>
<div class="a" style="left:460px;top:317px;width:107px;height:1px;background:#b9b9b9"></div>
<div class="a" style="left:20px;top:333px;width:1243px;height:1px;background:#e1e1e1"></div>
<div class="a" style="left:0px;top:333px;width:20px;height:1px;background:#c2c2c2"></div>
<div class="a" style="left:460px;top:333px;width:107px;height:1px;background:#b9b9b9"></div>
<div class="a" style="left:20px;top:349px;width:1243px;height:1px;background:#e1e1e1"></div>
<div class="a" style="left:0px;top:349px;width:20px;height:1px;background:#c2c2c2"></div>
<div class="a" style="left:460px;top:349px;width:107px;height:1px;background:#b9b9b9"></div>
<div class="a" style="left:20px;top:365px;width:1243px;height:1px;background:#e1e1e1"></div>
<div class="a" style="left:0px;top:365px;width:20px;height:1px;background:#c2c2c2"></div>
<div class="a" style="left:460px;top:365px;width:107px;height:1px;background:#b9b9b9"></div>
<div class="a" style="left:20px;top:381px;width:1243px;height:1px;background:#e1e1e1"></div>
<div class="a" style="left:0px;top:381px;width:20px;height:1px;background:#c2c2c2"></div>
<div class="a" style="left:460px;top:381px;width:107px;height:1px;background:#b9b9b9"></div>
<div class="a" style="left:20px;top:397px;width:1243px;height:1px;background:#e1e1e1"></div>
<div class="a" style="left:0px;top:397px;width:20px;height:1px;background:#c2c2c2"></div>
<div class="a" style="left:460px;top:397px;width:107px;height:1px;background:#b9b9b9"></div>
<div class="a" style="left:20px;top:413px;width:1243px;height:1px;background:#e1e1e1"></div>
<div class="a" style="left:0px;top:413px;width:20px;height:1px;background:#c2c2c2"></div>
<div class="a" style="left:460px;top:413px;width:107px;height:1px;background:#b9b9b9"></div>
<div class="a" style="left:20px;top:429px;width:1243px;height:1px;background:#e1e1e1"></div>
<div class="a" style="left:0px;top:429px;width:20px;height:1px;background:#c2c2c2"></div>
<div class="a" style="left:460px;top:429px;width:107px;height:1px;background:#b9b9b9"></div>
<div class="a" style="left:20px;top:445px;width:1243px;height:1px;background:#e1e1e1"></div>
<div class="a" style="left:0px;top:445px;width:20px;height:1px;background:#c2c2c2"></div>
<div class="a" style="left:460px;top:445px;width:107px;height:1px;background:#b9b9b9"></div>
<div class="a" style="left:20px;top:461px;width:1243px;height:1px;background:#e1e1e1"></div>
<div class="a" style="left:0px;top:461px;width:20px;height:1px;background:#c2c2c2"></div>
<div class="a" style="left:460px;top:461px;width:107px;height:1px;background:#b9b9b9"></div>
<div class="a" style="left:20px;top:477px;width:1243px;height:1px;background:#e1e1e1"></div>
<div class="a" style="left:0px;top:477px;width:20px;height:1px;background:#c2c2c2"></div>
<div class="a" style="left:460px;top:477px;width:107px;height:1px;background:#b9b9b9"></div>
<div class="a" style="left:20px;top:493px;width:1243px;height:1px;background:#e1e1e1"></div>
<div class="a" style="left:0px;top:493px;width:20px;height:1px;background:#c2c2c2"></div>
<div class="a" style="left:460px;top:493px;width:107px;height:1px;background:#b9b9b9"></div>
<div class="a" style="left:20px;top:509px;width:1243px;height:1px;background:#e1e1e1"></div>
<div class="a" style="left:0px;top:509px;width:20px;height:1px;background:#c2c2c2"></div>
<div class="a" style="left:460px;top:509px;width:107px;height:1px;background:#b9b9b9"></div>
<div class="a" style="left:20px;top:525px;width:1243px;height:1px;background:#e1e1e1"></div>
<div class="a" style="left:0px;top:525px;width:20px;height:1px;background:#c2c2c2"></div>
<div class="a" style="left:460px;top:525px;width:107px;height:1px;background:#b9b9b9"></div>
<div class="a" style="left:20px;top:541px;width:1243px;height:1px;background:#e1e1e1"></div>
<div class="a" style="left:0px;top:541px;width:20px;height:1px;background:#c2c2c2"></div>
<div class="a" style="left:460px;top:541px;width:107px;height:1px;background:#b9b9b9"></div>
<div class="a" style="left:20px;top:557px;width:1243px;height:1px;background:#e1e1e1"></div>
<div class="a" style="left:0px;top:557px;width:20px;height:1px;background:#c2c2c2"></div>
<div class="a" style="left:460px;top:557px;width:107px;height:1px;background:#b9b9b9"></div>
<div class="a" style="left:20px;top:573px;width:1243px;height:1px;background:#e1e1e1"></div>
<div class="a" style="left:0px;top:573px;width:20px;height:1px;background:#c2c2c2"></div>
<div class="a" style="left:460px;top:573px;width:107px;height:1px;background:#b9b9b9"></div>
<div class="a" style="left:20px;top:589px;width:1243px;height:1px;background:#e1e1e1"></div>
<div class="a" style="left:0px;top:589px;width:20px;height:1px;background:#c2c2c2"></div>
<div class="a" style="left:460px;top:589px;width:107px;height:1px;background:#b9b9b9"></div>
<div class="a" style="left:20px;top:605px;width:1243px;height:1px;background:#e1e1e1"></div>
<div class="a" style="left:0px;top:605px;width:20px;height:1px;background:#c2c2c2"></div>
<div class="a" style="left:460px;top:605px;width:107px;height:1px;background:#b9b9b9"></div>
<div class="a" style="left:20px;top:621px;width:1243px;height:1px;background:#e1e1e1"></div>
<div class="a" style="left:0px;top:621px;width:20px;height:1px;background:#c2c2c2"></div>
<div class="a" style="left:460px;top:621px;width:107px;height:1px;background:#b9b9b9"></div>
<div class="a" style="left:20px;top:637px;width:1243px;height:1px;background:#e1e1e1"></div>
<div class="a" style="left:0px;top:637px;width:20px;height:1px;background:#c2c2c2"></div>
<div class="a" style="left:460px;top:637px;width:107px;height:1px;background:#b9b9b9"></div>
<div class="a" style="left:20px;top:653px;width:1243px;height:1px;background:#e1e1e1"></div>
<div class="a" style="left:0px;top:653px;width:20px;height:1px;background:#c2c2c2"></div>
<div class="a" style="left:460px;top:653px;width:107px;height:1px;background:#b9b9b9"></div>
<div class="a" style="left:183px;top:190px;width:1px;height:474px;background:#d6d6d6"></div>
<div class="a" style="left:291px;top:190px;width:1px;height:474px;background:#d6d6d6"></div>
<div class="a" style="left:375px;top:190px;width:1px;height:474px;background:#d6d6d6"></div>
<div class="a" style="left:459px;top:190px;width:1px;height:474px;background:#d6d6d6"></div>
<div class="a" style="left:566px;top:190px;width:1px;height:474px;background:#d6d6d6"></div>
<div class="a" style="left:666px;top:190px;width:1px;height:474px;background:#d6d6d6"></div>
<div class="a" style="left:782px;top:190px;width:1px;height:474px;background:#d6d6d6"></div>
<div class="a" style="left:834px;top:190px;width:1px;height:474px;background:#d6d6d6"></div>
<div class="a" style="left:885px;top:190px;width:1px;height:474px;background:#d6d6d6"></div>
<div class="a" style="left:936px;top:190px;width:1px;height:474px;background:#d6d6d6"></div>
<div class="a" style="left:987px;top:190px;width:1px;height:474px;background:#d6d6d6"></div>
<div class="a" style="left:1038px;top:190px;width:1px;height:474px;background:#d6d6d6"></div>
<div class="a" style="left:1090px;top:190px;width:1px;height:474px;background:#d6d6d6"></div>
<div class="a" style="left:1141px;top:190px;width:1px;height:474px;background:#d6d6d6"></div>
<div class="a" style="left:1192px;top:190px;width:1px;height:474px;background:#d6d6d6"></div>
<div class="a" style="left:1243px;top:190px;width:1px;height:474px;background:#d6d6d6"></div>
<div class="a" style="left:460px;top:222px;width:1.5px;height:442px;background:#3a7256"></div>
<div class="a" style="left:566.5px;top:222px;width:1.5px;height:442px;background:#3a7256"></div>
<div class="a" style="left:19px;top:222px;width:2px;height:442px;background:#3d7058"></div>
<div class="a" style="left:0;top:190px;width:1280px;height:474px;overflow:hidden">
<span class="t" style="font-size:10px;color:#3a3a3a;-webkit-text-stroke:0;line-height:14px;top:2.3px;left:10px;transform-origin:50% 50%;transform:translateX(-50%);">1</span>
<span class="t" style="font-size:10px;color:#3a3a3a;-webkit-text-stroke:0;line-height:14px;top:18.3px;left:10px;transform-origin:50% 50%;transform:translateX(-50%);">2</span>
<span class="t" style="font-size:10px;color:#4c5f54;-webkit-text-stroke:0;line-height:14px;top:34.3px;left:10px;transform-origin:50% 50%;transform:translateX(-50%);">3</span>
<span class="t" style="font-size:10px;color:#4c5f54;-webkit-text-stroke:0;line-height:14px;top:50.3px;left:10px;transform-origin:50% 50%;transform:translateX(-50%);">4</span>
<span class="t" style="font-size:10px;color:#4c5f54;-webkit-text-stroke:0;line-height:14px;top:66.3px;left:10px;transform-origin:50% 50%;transform:translateX(-50%);">5</span>
<span class="t" style="font-size:10px;color:#4c5f54;-webkit-text-stroke:0;line-height:14px;top:82.3px;left:10px;transform-origin:50% 50%;transform:translateX(-50%);">6</span>
<span class="t" style="font-size:10px;color:#4c5f54;-webkit-text-stroke:0;line-height:14px;top:98.3px;left:10px;transform-origin:50% 50%;transform:translateX(-50%);">7</span>
<span class="t" style="font-size:10px;color:#4c5f54;-webkit-text-stroke:0;line-height:14px;top:114.3px;left:10px;transform-origin:50% 50%;transform:translateX(-50%);">8</span>
<span class="t" style="font-size:10px;color:#4c5f54;-webkit-text-stroke:0;line-height:14px;top:130.3px;left:10px;transform-origin:50% 50%;transform:translateX(-50%);">9</span>
<span class="t" style="font-size:10px;color:#4c5f54;-webkit-text-stroke:0;line-height:14px;top:146.3px;left:10px;transform-origin:50% 50%;transform:translateX(-50%);">10</span>
<span class="t" style="font-size:10px;color:#4c5f54;-webkit-text-stroke:0;line-height:14px;top:162.3px;left:10px;transform-origin:50% 50%;transform:translateX(-50%);">11</span>
<span class="t" style="font-size:10px;color:#4c5f54;-webkit-text-stroke:0;line-height:14px;top:178.3px;left:10px;transform-origin:50% 50%;transform:translateX(-50%);">12</span>
<span class="t" style="font-size:10px;color:#4c5f54;-webkit-text-stroke:0;line-height:14px;top:194.3px;left:10px;transform-origin:50% 50%;transform:translateX(-50%);">13</span>
<span class="t" style="font-size:10px;color:#4c5f54;-webkit-text-stroke:0;line-height:14px;top:210.3px;left:10px;transform-origin:50% 50%;transform:translateX(-50%);">14</span>
<span class="t" style="font-size:10px;color:#4c5f54;-webkit-text-stroke:0;line-height:14px;top:226.3px;left:10px;transform-origin:50% 50%;transform:translateX(-50%);">15</span>
<span class="t" style="font-size:10px;color:#4c5f54;-webkit-text-stroke:0;line-height:14px;top:242.3px;left:10px;transform-origin:50% 50%;transform:translateX(-50%);">16</span>
<span class="t" style="font-size:10px;color:#4c5f54;-webkit-text-stroke:0;line-height:14px;top:258.3px;left:10px;transform-origin:50% 50%;transform:translateX(-50%);">17</span>
<span class="t" style="font-size:10px;color:#4c5f54;-webkit-text-stroke:0;line-height:14px;top:274.3px;left:10px;transform-origin:50% 50%;transform:translateX(-50%);">18</span>
<span class="t" style="font-size:10px;color:#4c5f54;-webkit-text-stroke:0;line-height:14px;top:290.3px;left:10px;transform-origin:50% 50%;transform:translateX(-50%);">19</span>
<span class="t" style="font-size:10px;color:#4c5f54;-webkit-text-stroke:0;line-height:14px;top:306.3px;left:10px;transform-origin:50% 50%;transform:translateX(-50%);">20</span>
<span class="t" style="font-size:10px;color:#4c5f54;-webkit-text-stroke:0;line-height:14px;top:322.3px;left:10px;transform-origin:50% 50%;transform:translateX(-50%);">21</span>
<span class="t" style="font-size:10px;color:#4c5f54;-webkit-text-stroke:0;line-height:14px;top:338.3px;left:10px;transform-origin:50% 50%;transform:translateX(-50%);">22</span>
<span class="t" style="font-size:10px;color:#4c5f54;-webkit-text-stroke:0;line-height:14px;top:354.3px;left:10px;transform-origin:50% 50%;transform:translateX(-50%);">23</span>
<span class="t" style="font-size:10px;color:#4c5f54;-webkit-text-stroke:0;line-height:14px;top:370.3px;left:10px;transform-origin:50% 50%;transform:translateX(-50%);">24</span>
<span class="t" style="font-size:10px;color:#4c5f54;-webkit-text-stroke:0;line-height:14px;top:386.3px;left:10px;transform-origin:50% 50%;transform:translateX(-50%);">25</span>
<span class="t" style="font-size:10px;color:#4c5f54;-webkit-text-stroke:0;line-height:14px;top:402.3px;left:10px;transform-origin:50% 50%;transform:translateX(-50%);">26</span>
<span class="t" style="font-size:10px;color:#4c5f54;-webkit-text-stroke:0;line-height:14px;top:418.3px;left:10px;transform-origin:50% 50%;transform:translateX(-50%);">27</span>
<span class="t" style="font-size:10px;color:#4c5f54;-webkit-text-stroke:0;line-height:14px;top:434.3px;left:10px;transform-origin:50% 50%;transform:translateX(-50%);">28</span>
<span class="t" style="font-size:10px;color:#4c5f54;-webkit-text-stroke:0;line-height:14px;top:450.3px;left:10px;transform-origin:50% 50%;transform:translateX(-50%);">29</span>
<span class="t" style="font-size:10px;color:#4c5f54;-webkit-text-stroke:0;line-height:14px;top:466.3px;left:10px;transform-origin:50% 50%;transform:translateX(-50%);">30</span>
<span class="t" style="font-size:10.5px;color:#242424;line-height:14px;top:2.0px;left:185.8px;transform-origin:0 50%;transform:scaleX(1.0410);">Плановое значение</span>
<span class="t" style="font-size:10.5px;color:#242424;line-height:14px;top:2.0px;left:293.8px;transform-origin:0 50%;transform:scaleX(1.0796);">Итого продажи</span>
<span class="t" style="font-size:10.5px;color:#242424;line-height:14px;top:2.0px;left:377.8px;transform-origin:0 50%;transform:scaleX(1.0503);">Поступление</span>
<span class="t" style="font-size:10.5px;color:#242424;line-height:14px;top:2.0px;left:461.8px;transform-origin:0 50%;transform:scaleX(1.0576);">Дата поступления</span>
<span class="t" style="font-size:10.5px;color:#242424;line-height:14px;top:2.0px;left:568.8px;transform-origin:0 50%;transform:scaleX(1.0447);">Остаток на начало</span>
<span class="t" style="font-size:10.5px;color:#242424;line-height:14px;top:2.0px;left:668.8px;transform-origin:0 50%;transform:scaleX(1.0789);">Остаток на конец</span>
<span class="t" style="font-size:10.5px;color:#242424;line-height:14px;top:18.0px;left:22.5px;transform-origin:0 50%;transform:scaleX(1.0323);">Норма оборачиваемости 3 дня</span>
<span class="t" style="font-size:10.5px;color:#242424;line-height:14px;top:34.0px;right:1098px;transform-origin:100% 50%;transform:scaleX(0.8556);">1</span>
<span class="t" style="font-size:10.5px;color:#242424;line-height:14px;top:34.0px;right:990px;transform-origin:100% 50%;transform:scaleX(0.9241);">559</span>
<svg style="left:184px;top:32px" width="4" height="4"><path d="M0 0H4L0 4Z" fill="#1f6e43"/></svg>
<span class="t" style="font-size:10.5px;color:#242424;line-height:14px;top:50.0px;right:1098px;transform-origin:100% 50%;transform:scaleX(0.8556);">2</span>
<span class="t" style="font-size:10.5px;color:#242424;line-height:14px;top:50.0px;right:990px;transform-origin:100% 50%;transform:scaleX(0.9241);">544</span>
<svg style="left:184px;top:48px" width="4" height="4"><path d="M0 0H4L0 4Z" fill="#1f6e43"/></svg>
<span class="t" style="font-size:10.5px;color:#242424;line-height:14px;top:66.0px;right:1098px;transform-origin:100% 50%;transform:scaleX(0.8556);">3</span>
<span class="t" style="font-size:10.5px;color:#242424;line-height:14px;top:66.0px;right:990px;transform-origin:100% 50%;transform:scaleX(0.9241);">564</span>
<svg style="left:184px;top:64px" width="4" height="4"><path d="M0 0H4L0 4Z" fill="#1f6e43"/></svg>
<span class="t" style="font-size:10.5px;color:#242424;line-height:14px;top:82.0px;right:1098px;transform-origin:100% 50%;transform:scaleX(0.8556);">4</span>
<span class="t" style="font-size:10.5px;color:#242424;line-height:14px;top:82.0px;right:990px;transform-origin:100% 50%;transform:scaleX(0.9241);">896</span>
<svg style="left:184px;top:80px" width="4" height="4"><path d="M0 0H4L0 4Z" fill="#1f6e43"/></svg>
<span class="t" style="font-size:10.5px;color:#242424;line-height:14px;top:98.0px;right:1098px;transform-origin:100% 50%;transform:scaleX(0.8556);">5</span>
<span class="t" style="font-size:10.5px;color:#242424;line-height:14px;top:98.0px;right:990px;transform-origin:100% 50%;transform:scaleX(0.9649);">1183</span>
<svg style="left:184px;top:96px" width="4" height="4"><path d="M0 0H4L0 4Z" fill="#1f6e43"/></svg>
<span class="t" style="font-size:10.5px;color:#242424;line-height:14px;top:114.0px;right:1098px;transform-origin:100% 50%;transform:scaleX(0.8556);">6</span>
<span class="t" style="font-size:10.5px;color:#242424;line-height:14px;top:114.0px;right:990px;transform-origin:100% 50%;transform:scaleX(0.9332);">1443</span>
<svg style="left:184px;top:112px" width="4" height="4"><path d="M0 0H4L0 4Z" fill="#1f6e43"/></svg>
<span class="t" style="font-size:10.5px;color:#242424;line-height:14px;top:130.0px;right:1098px;transform-origin:100% 50%;transform:scaleX(0.8556);">7</span>
<span class="t" style="font-size:10.5px;color:#242424;line-height:14px;top:130.0px;right:990px;transform-origin:100% 50%;transform:scaleX(0.9332);">1562</span>
<svg style="left:184px;top:128px" width="4" height="4"><path d="M0 0H4L0 4Z" fill="#1f6e43"/></svg>
<span class="t" style="font-size:10.5px;color:#242424;line-height:14px;top:146.0px;right:1098px;transform-origin:100% 50%;transform:scaleX(0.8556);">8</span>
<span class="t" style="font-size:10.5px;color:#242424;line-height:14px;top:146.0px;right:990px;transform-origin:100% 50%;transform:scaleX(0.9332);">1683</span>
<svg style="left:184px;top:144px" width="4" height="4"><path d="M0 0H4L0 4Z" fill="#1f6e43"/></svg>
<span class="t" style="font-size:10.5px;color:#242424;line-height:14px;top:162.0px;right:1098px;transform-origin:100% 50%;transform:scaleX(0.8556);">9</span>
<span class="t" style="font-size:10.5px;color:#242424;line-height:14px;top:162.0px;right:990px;transform-origin:100% 50%;transform:scaleX(0.9332);">1886</span>
<svg style="left:184px;top:160px" width="4" height="4"><path d="M0 0H4L0 4Z" fill="#1f6e43"/></svg>
<span class="t" style="font-size:10.5px;color:#242424;line-height:14px;top:178.0px;right:1098px;transform-origin:100% 50%;transform:scaleX(0.9070);">10</span>
<span class="t" style="font-size:10.5px;color:#242424;line-height:14px;top:178.0px;right:990px;transform-origin:100% 50%;transform:scaleX(0.9332);">1397</span>
<svg style="left:184px;top:176px" width="4" height="4"><path d="M0 0H4L0 4Z" fill="#1f6e43"/></svg>
<span class="t" style="font-size:10.5px;color:#242424;line-height:14px;top:194.0px;right:1098px;transform-origin:100% 50%;transform:scaleX(0.9719);">11</span>
<span class="t" style="font-size:10.5px;color:#242424;line-height:14px;top:194.0px;right:990px;transform-origin:100% 50%;transform:scaleX(0.9332);">1065</span>
<svg style="left:184px;top:192px" width="4" height="4"><path d="M0 0H4L0 4Z" fill="#1f6e43"/></svg>
<span class="t" style="font-size:10.5px;color:#242424;line-height:14px;top:210.0px;right:1098px;transform-origin:100% 50%;transform:scaleX(0.9070);">12</span>
<span class="t" style="font-size:10.5px;color:#242424;line-height:14px;top:210.0px;right:990px;transform-origin:100% 50%;transform:scaleX(0.9241);">580</span>
<svg style="left:184px;top:208px" width="4" height="4"><path d="M0 0H4L0 4Z" fill="#1f6e43"/></svg>
<span class="t" style="font-size:10.5px;color:#242424;line-height:14px;top:226.0px;right:1098px;transform-origin:100% 50%;transform:scaleX(0.9070);">13</span>
<span class="t" style="font-size:10.5px;color:#242424;line-height:14px;top:226.0px;right:990px;transform-origin:100% 50%;transform:scaleX(0.9241);">597</span>
<svg style="left:184px;top:224px" width="4" height="4"><path d="M0 0H4L0 4Z" fill="#1f6e43"/></svg>
<span class="t" style="font-size:10.5px;color:#242424;line-height:14px;top:242.0px;right:1098px;transform-origin:100% 50%;transform:scaleX(0.9070);">14</span>
<span class="t" style="font-size:10.5px;color:#242424;line-height:14px;top:242.0px;right:990px;transform-origin:100% 50%;transform:scaleX(0.9241);">590</span>
<svg style="left:184px;top:240px" width="4" height="4"><path d="M0 0H4L0 4Z" fill="#1f6e43"/></svg>
<span class="t" style="font-size:10.5px;color:#242424;line-height:14px;top:258.0px;right:1098px;transform-origin:100% 50%;transform:scaleX(0.9070);">15</span>
<span class="t" style="font-size:10.5px;color:#242424;line-height:14px;top:258.0px;right:990px;transform-origin:100% 50%;transform:scaleX(0.9241);">591</span>
<svg style="left:184px;top:256px" width="4" height="4"><path d="M0 0H4L0 4Z" fill="#1f6e43"/></svg>
<span class="t" style="font-size:10.5px;color:#242424;line-height:14px;top:274.0px;right:1098px;transform-origin:100% 50%;transform:scaleX(0.9070);">16</span>
<span class="t" style="font-size:10.5px;color:#242424;line-height:14px;top:274.0px;right:990px;transform-origin:100% 50%;transform:scaleX(0.9241);">642</span>
<svg style="left:184px;top:272px" width="4" height="4"><path d="M0 0H4L0 4Z" fill="#1f6e43"/></svg>
<span class="t" style="font-size:10.5px;color:#242424;line-height:14px;top:290.0px;right:1098px;transform-origin:100% 50%;transform:scaleX(0.9070);">17</span>
<span class="t" style="font-size:10.5px;color:#242424;line-height:14px;top:290.0px;right:990px;transform-origin:100% 50%;transform:scaleX(0.9241);">621</span>
<svg style="left:184px;top:288px" width="4" height="4"><path d="M0 0H4L0 4Z" fill="#1f6e43"/></svg>
<span class="t" style="font-size:10.5px;color:#242424;line-height:14px;top:306.0px;right:1098px;transform-origin:100% 50%;transform:scaleX(0.9070);">18</span>
<span class="t" style="font-size:10.5px;color:#242424;line-height:14px;top:306.0px;right:990px;transform-origin:100% 50%;transform:scaleX(0.9241);">681</span>
<svg style="left:184px;top:304px" width="4" height="4"><path d="M0 0H4L0 4Z" fill="#1f6e43"/></svg>
<span class="t" style="font-size:10.5px;color:#242424;line-height:14px;top:322.0px;right:1098px;transform-origin:100% 50%;transform:scaleX(0.9070);">19</span>
<span class="t" style="font-size:10.5px;color:#242424;line-height:14px;top:322.0px;right:990px;transform-origin:100% 50%;transform:scaleX(0.9241);">665</span>
<svg style="left:184px;top:320px" width="4" height="4"><path d="M0 0H4L0 4Z" fill="#1f6e43"/></svg>
<span class="t" style="font-size:10.5px;color:#242424;line-height:14px;top:338.0px;right:1098px;transform-origin:100% 50%;transform:scaleX(0.9070);">20</span>
<span class="t" style="font-size:10.5px;color:#242424;line-height:14px;top:338.0px;right:990px;transform-origin:100% 50%;transform:scaleX(0.9241);">690</span>
<svg style="left:184px;top:336px" width="4" height="4"><path d="M0 0H4L0 4Z" fill="#1f6e43"/></svg>
<span class="t" style="font-size:10.5px;color:#242424;line-height:14px;top:354.0px;right:1098px;transform-origin:100% 50%;transform:scaleX(0.9070);">21</span>
<span class="t" style="font-size:10.5px;color:#242424;line-height:14px;top:354.0px;right:990px;transform-origin:100% 50%;transform:scaleX(0.9241);">730</span>
<svg style="left:184px;top:352px" width="4" height="4"><path d="M0 0H4L0 4Z" fill="#1f6e43"/></svg>
<span class="t" style="font-size:10.5px;color:#242424;line-height:14px;top:370.0px;right:1098px;transform-origin:100% 50%;transform:scaleX(0.9070);">22</span>
<span class="t" style="font-size:10.5px;color:#242424;line-height:14px;top:370.0px;right:990px;transform-origin:100% 50%;transform:scaleX(0.9241);">728</span>
<svg style="left:184px;top:368px" width="4" height="4"><path d="M0 0H4L0 4Z" fill="#1f6e43"/></svg>
<span class="t" style="font-size:10.5px;color:#242424;line-height:14px;top:386.0px;right:1098px;transform-origin:100% 50%;transform:scaleX(0.9070);">23</span>
<span class="t" style="font-size:10.5px;color:#242424;line-height:14px;top:386.0px;right:990px;transform-origin:100% 50%;transform:scaleX(0.9241);">641</span>
<svg style="left:184px;top:384px" width="4" height="4"><path d="M0 0H4L0 4Z" fill="#1f6e43"/></svg>
<span class="t" style="font-size:10.5px;color:#242424;line-height:14px;top:402.0px;right:1098px;transform-origin:100% 50%;transform:scaleX(0.9070);">24</span>
<span class="t" style="font-size:10.5px;color:#242424;line-height:14px;top:402.0px;right:990px;transform-origin:100% 50%;transform:scaleX(0.9241);">550</span>
<svg style="left:184px;top:400px" width="4" height="4"><path d="M0 0H4L0 4Z" fill="#1f6e43"/></svg>
<span class="t" style="font-size:10.5px;color:#242424;line-height:14px;top:418.0px;right:1098px;transform-origin:100% 50%;transform:scaleX(0.9070);">25</span>
<span class="t" style="font-size:10.5px;color:#242424;line-height:14px;top:418.0px;right:990px;transform-origin:100% 50%;transform:scaleX(0.9241);">521</span>
<svg style="left:184px;top:416px" width="4" height="4"><path d="M0 0H4L0 4Z" fill="#1f6e43"/></svg>
<span class="t" style="font-size:10.5px;color:#242424;line-height:14px;top:434.0px;right:1098px;transform-origin:100% 50%;transform:scaleX(0.9070);">26</span>
<span class="t" style="font-size:10.5px;color:#242424;line-height:14px;top:434.0px;right:990px;transform-origin:100% 50%;transform:scaleX(0.9241);">531</span>
<svg style="left:184px;top:432px" width="4" height="4"><path d="M0 0H4L0 4Z" fill="#1f6e43"/></svg>
<span class="t" style="font-size:10.5px;color:#242424;line-height:14px;top:450.0px;right:1098px;transform-origin:100% 50%;transform:scaleX(0.9070);">27</span>
<span class="t" style="font-size:10.5px;color:#242424;line-height:14px;top:450.0px;right:990px;transform-origin:100% 50%;transform:scaleX(0.9241);">574</span>
<svg style="left:184px;top:448px" width="4" height="4"><path d="M0 0H4L0 4Z" fill="#1f6e43"/></svg>
<span class="t" style="font-size:10.5px;color:#242424;line-height:14px;top:466.0px;right:1098px;transform-origin:100% 50%;transform:scaleX(0.9070);">28</span>
<span class="t" style="font-size:10.5px;color:#242424;line-height:14px;top:466.0px;right:990px;transform-origin:100% 50%;transform:scaleX(0.9241);">607</span>
<svg style="left:184px;top:464px" width="4" height="4"><path d="M0 0H4L0 4Z" fill="#1f6e43"/></svg>
<span class="t" style="font-size:10.5px;color:#242424;line-height:14px;top:386.0px;right:906px;transform-origin:100% 50%;transform:scaleX(0.9241);">280</span>
<span class="t" style="font-size:10.5px;color:#242424;line-height:14px;top:386.0px;right:822px;transform-origin:100% 50%;transform:scaleX(0.9241);">193</span>
<span class="t" style="font-size:10.5px;color:#242424;line-height:14px;top:386.0px;right:715px;transform-origin:100% 50%;transform:scaleX(0.9512);">23.07.2016</span>
<span class="t" style="font-size:10.5px;color:#242424;line-height:14px;top:386.0px;right:615px;transform-origin:100% 50%;transform:scaleX(0.9241);">728</span>
<span class="t" style="font-size:10.5px;color:#242424;line-height:14px;top:386.0px;right:499px;transform-origin:100% 50%;transform:scaleX(0.9241);">641</span>
<span class="t" style="font-size:10.5px;color:#242424;line-height:14px;top:402.0px;right:906px;transform-origin:100% 50%;transform:scaleX(0.9241);">206</span>
<span class="t" style="font-size:10.5px;color:#242424;line-height:14px;top:402.0px;right:822px;transform-origin:100% 50%;transform:scaleX(0.9672);">115</span>
<span class="t" style="font-size:10.5px;color:#242424;line-height:14px;top:402.0px;right:715px;transform-origin:100% 50%;transform:scaleX(0.9512);">24.07.2016</span>
<span class="t" style="font-size:10.5px;color:#242424;line-height:14px;top:402.0px;right:615px;transform-origin:100% 50%;transform:scaleX(0.9241);">641</span>
<span class="t" style="font-size:10.5px;color:#242424;line-height:14px;top:402.0px;right:499px;transform-origin:100% 50%;transform:scaleX(0.9241);">550</span>
<span class="t" style="font-size:10.5px;color:#242424;line-height:14px;top:418.0px;right:906px;transform-origin:100% 50%;transform:scaleX(0.9241);">155</span>
<span class="t" style="font-size:10.5px;color:#242424;line-height:14px;top:418.0px;right:822px;transform-origin:100% 50%;transform:scaleX(0.9241);">126</span>
<span class="t" style="font-size:10.5px;color:#242424;line-height:14px;top:418.0px;right:715px;transform-origin:100% 50%;transform:scaleX(0.9512);">25.07.2016</span>
<span class="t" style="font-size:10.5px;color:#242424;line-height:14px;top:418.0px;right:615px;transform-origin:100% 50%;transform:scaleX(0.9241);">550</span>
<span class="t" style="font-size:10.5px;color:#242424;line-height:14px;top:418.0px;right:499px;transform-origin:100% 50%;transform:scaleX(0.9241);">521</span>
<span class="t" style="font-size:10.5px;color:#242424;line-height:14px;top:434.0px;right:906px;transform-origin:100% 50%;transform:scaleX(0.9241);">189</span>
<span class="t" style="font-size:10.5px;color:#242424;line-height:14px;top:434.0px;right:822px;transform-origin:100% 50%;transform:scaleX(0.9241);">199</span>
<span class="t" style="font-size:10.5px;color:#242424;line-height:14px;top:434.0px;right:715px;transform-origin:100% 50%;transform:scaleX(0.9512);">26.07.2016</span>
<span class="t" style="font-size:10.5px;color:#242424;line-height:14px;top:434.0px;right:615px;transform-origin:100% 50%;transform:scaleX(0.9241);">521</span>
<span class="t" style="font-size:10.5px;color:#242424;line-height:14px;top:434.0px;right:499px;transform-origin:100% 50%;transform:scaleX(0.9241);">531</span>
<span class="t" style="font-size:10.5px;color:#242424;line-height:14px;top:450.0px;right:906px;transform-origin:100% 50%;transform:scaleX(0.9241);">177</span>
<span class="t" style="font-size:10.5px;color:#242424;line-height:14px;top:450.0px;right:822px;transform-origin:100% 50%;transform:scaleX(0.9241);">220</span>
<span class="t" style="font-size:10.5px;color:#242424;line-height:14px;top:450.0px;right:715px;transform-origin:100% 50%;transform:scaleX(0.9512);">27.07.2016</span>
<span class="t" style="font-size:10.5px;color:#242424;line-height:14px;top:450.0px;right:615px;transform-origin:100% 50%;transform:scaleX(0.9241);">531</span>
<span class="t" style="font-size:10.5px;color:#242424;line-height:14px;top:450.0px;right:499px;transform-origin:100% 50%;transform:scaleX(0.9241);">574</span>
<span class="t" style="font-size:10.5px;color:#242424;line-height:14px;top:466.0px;right:906px;transform-origin:100% 50%;transform:scaleX(0.9241);">165</span>
<span class="t" style="font-size:10.5px;color:#242424;line-height:14px;top:466.0px;right:822px;transform-origin:100% 50%;transform:scaleX(0.9241);">198</span>
<span class="t" style="font-size:10.5px;color:#242424;line-height:14px;top:466.0px;right:715px;transform-origin:100% 50%;transform:scaleX(0.9512);">28.07.2016</span>
<span class="t" style="font-size:10.5px;color:#242424;line-height:14px;top:466.0px;right:615px;transform-origin:100% 50%;transform:scaleX(0.9241);">574</span>
<span class="t" style="font-size:10.5px;color:#242424;line-height:14px;top:466.0px;right:499px;transform-origin:100% 50%;transform:scaleX(0.9241);">607</span>
</div>
<div class="a" style="left:1262.5px;top:174px;width:1px;height:490px;background:#9a9a9a"></div>
<div class="a" style="left:1263px;top:173px;width:17px;height:491px;background:#e6e6e6"></div>
<div class="a" style="left:1265.5px;top:176px;width:12px;height:11.5px;background:#fff;border:1px solid #c8c8c8"></div>
<svg style="left:1269px;top:180.3px;" width="5" height="3" viewBox="0 0 5 3"><path d="M0 3L2.5 0L5 3Z" fill="#666"/></svg>
<div class="a" style="left:1265.5px;top:188px;width:12px;height:420px;background:#fff;border:1px solid #c8c8c8"></div>
<div class="a" style="left:1265.5px;top:652px;width:12px;height:11.5px;background:#fff;border:1px solid #c8c8c8"></div>
<svg style="left:1269px;top:656.5px;" width="5" height="3" viewBox="0 0 5 3"><path d="M0 0L2.5 3L5 0Z" fill="#666"/></svg>
<div class="a" style="left:0px;top:664px;width:1280px;height:22px;background:#e6e6e6"></div>
<div class="a" style="left:0px;top:664px;width:1280px;height:1px;background:#a8a8a8"></div>
<svg style="left:21px;top:671.5px;" width="5" height="7" viewBox="0 0 5 7"><path d="M4.5 0.5L1 3.5L4.5 6.5" fill="none" stroke="#d4d4d4" stroke-width="1.2"/></svg>
<svg style="left:44px;top:671.5px;" width="5" height="7" viewBox="0 0 5 7"><path d="M0.5 0.5L4 3.5L0.5 6.5" fill="none" stroke="#d4d4d4" stroke-width="1.2"/></svg>
<div class="a" style="left:80px;top:664px;width:48px;height:20px;background:#fff;border-bottom:2px solid #2f6e4f"></div>
<span class="t" style="font-size:10px;color:#2a6848;font-weight:bold;line-height:14px;top:667.8px;left:89.5px;transform-origin:0 50%;transform:scaleX(0.9936);">Лист1</span>
<svg style="left:154.5px;top:668.5px;" width="13" height="13" viewBox="0 0 13 13"><circle cx="6.5" cy="6.5" r="5.8" fill="none" stroke="#808080" stroke-width="1"/><path d="M3.5 6.5H9.5M6.5 3.5V9.5" stroke="#666" stroke-width="1.4"/></svg>
<div class="a" style="left:768.5px;top:671.5px;width:1.3px;height:1.3px;background:#aaa"></div>
<div class="a" style="left:768.5px;top:674.7px;width:1.3px;height:1.3px;background:#aaa"></div>
<div class="a" style="left:768.5px;top:677.9px;width:1.3px;height:1.3px;background:#aaa"></div>
<div class="a" style="left:782px;top:670px;width:11px;height:11px;background:#fff;border:1px solid #c8c8c8"></div>
<svg style="left:785.5px;top:673px;" width="3" height="5" viewBox="0 0 3 5"><path d="M3 0L0 2.5L3 5Z" fill="#666"/></svg>
<div class="a" style="left:793px;top:670px;width:432px;height:11px;background:#fff;border:1px solid #c8c8c8"></div>
<div class="a" style="left:1251.5px;top:670px;width:11px;height:11px;background:#fff;border:1px solid #c8c8c8"></div>
<svg style="left:1256px;top:673px;" width="3" height="5" viewBox="0 0 3 5"><path d="M0 0L3 2.5L0 5Z" fill="#666"/></svg>
<div class="a" style="left:0px;top:686px;width:1280px;height:18px;background:#f1f1f1"></div>
<div class="a" style="left:0px;top:686px;width:1280px;height:1px;background:#dcdcdc"></div>
<span class="t" style="font-size:9.5px;color:#555;line-height:14px;top:688.3px;left:5.5px;transform-origin:0 50%;transform:scaleX(1.0053);">Готово</span>
<svg style="left:51px;top:689.5px;" width="11" height="11" viewBox="0 0 11 11"><rect x="0.5" y="2.5" width="10" height="8" fill="none" stroke="#777" stroke-width="0.9"/><path d="M0.5 5.2H10.5M0.5 7.8H10.5M4 2.5V10.5" stroke="#999" stroke-width="0.7"/><circle cx="2.2" cy="1.8" r="1.6" fill="#666"/></svg>
<span class="t" style="font-size:9.5px;color:#555;line-height:14px;top:688.3px;left:782.6px;transform-origin:0 50%;transform:scaleX(0.9124);">Среднее: 15.07.2016</span>
<span class="t" style="font-size:9.5px;color:#555;line-height:14px;top:688.3px;left:879.7px;transform-origin:0 50%;transform:scaleX(0.9421);">Количество: 30</span>
<span class="t" style="font-size:9.5px;color:#555;line-height:14px;top:688.3px;left:956px;transform-origin:0 50%;transform:scaleX(0.9022);">Сумма: 15.04.5396</span>
<div class="a" style="left:1046px;top:686.5px;width:30px;height:17.5px;background:#d2d2d2"></div>
<svg style="left:1056px;top:689.5px;" width="11" height="10.5" viewBox="0 0 11 10.5"><path d="M0.5 0.5H10.5V10H0.5ZM0.5 3.7H10.5M0.5 6.8H10.5M3.8 0.5V10M7.2 0.5V10" fill="none" stroke="#606060" stroke-width="0.9"/></svg>
<svg style="left:1086.5px;top:689.5px;" width="11.5" height="10.5" viewBox="0 0 11.5 10.5"><path d="M0.5 0.5H11V10H0.5Z" fill="none" stroke="#6c6c6c" stroke-width="0.9"/><path d="M3.2 2.8H8.3V7.7H3.2Z" fill="none" stroke="#6c6c6c" stroke-width="0.9"/></svg>
<svg style="left:1117px;top:689.5px;" width="11" height="10" viewBox="0 0 11 10"><path d="M0.5 0.5H10.5V9.5H0.5Z" fill="none" stroke="#606060" stroke-width="0.9"/><path d="M3.6 0.5V5.8H7.6V0.5" fill="none" stroke="#606060" stroke-width="0.9"/></svg>
<div class="a" style="left:1141.5px;top:694.5px;width:5px;height:1.2px;background:#555"></div>
<div class="a" style="left:1150px;top:694.8px;width:80px;height:1px;background:#9a9a9a"></div>
<div class="a" style="left:1188px;top:690.5px;width:2.6px;height:9px;background:#555"></div>
<div class="a" style="left:1233.5px;top:694.5px;width:6px;height:1.2px;background:#555"></div>
<div class="a" style="left:1235.9px;top:692.1px;width:1.2px;height:6px;background:#555"></div>
<span class="t" style="font-size:9.5px;color:#555;line-height:14px;top:688.3px;left:1251px;transform-origin:0 50%;transform:scaleX(0.9049);">100%</span>
<div class="a" style="left:292.5px;top:199.7px;width:522.5px;height:375.59999999999997px;border-radius:5px;border:1px solid #3c4654;box-shadow:0 2px 9px 3px rgba(0,0,0,.75),inset 0 0 0 1px rgba(255,255,255,.65);background:linear-gradient(90deg,#c0d6ee 0%,#c6daf0 11%,#aac8ea 19%,#a8c7e9 48%,#c4d9f0 68%,#d6e5f5 86%,#d2e2f3 100%)"></div>
<div class="a" style="left:296px;top:203px;width:72px;height:17px;background:rgba(255,255,255,.55);filter:blur(4px);border-radius:8px"></div>
<div class="a" style="left:298px;top:222px;width:511.5px;height:347px;background:#f0f0f0;border:1px solid #7f8ea3;box-shadow:0 0 0 1px rgba(255,255,255,.55)"></div>
<span class="t" style="font-size:10px;color:#1b1b1b;line-height:14px;top:205.2px;left:298.5px;transform-origin:0 50%;transform:scaleX(0.9606);">Формат ячеек</span>
<div class="a" style="left:749.5px;top:200px;width:22px;height:14.5px;border:1px solid #55647a;border-top:none;border-radius:0 0 0 4px;background:linear-gradient(#c6d5e6 0%,#b4c6db 45%,#9fb5cf 50%,#b9cde3 100%)"></div>
<span class="t" style="font-size:9.5px;color:#fff;font-weight:bold;text-shadow:0 0 1px #223,0 0 1px #223,0 0 2px #223;line-height:14px;top:200.0px;left:760.5px;transform-origin:50% 50%;transform:translateX(-50%);">?</span>
<div class="a" style="left:771px;top:200px;width:38.5px;height:14.5px;border:1px solid #4b2a2a;border-top:none;border-radius:0 0 4px 0;background:linear-gradient(#e5a59a 0%,#d4685a 45%,#c43a28 50%,#d8614a 100%)"></div>
<svg style="left:785.5px;top:203px;" width="9" height="8" viewBox="0 0 9 8"><path d="M1.2 1L7.8 7M7.8 1L1.2 7" stroke="#3a1a1a" stroke-width="3" stroke-linecap="round"/><path d="M1.2 1L7.8 7M7.8 1L1.2 7" stroke="#fff" stroke-width="1.7" stroke-linecap="round"/></svg>
<div class="a" style="left:303px;top:245.5px;width:499.5px;height:292.5px;background:#fff;border:1px solid #a4a7ad"></div>
<div class="a" style="left:348px;top:231px;width:76.5px;height:15px;border:1px solid #999ca3;border-bottom:none;background:linear-gradient(#f2f2f2 0%,#ebebeb 50%,#dddddd 51%,#d2d2d2 100%)"></div>
<span class="t" style="font-size:8.2px;color:#111;font-family:'DejaVu Sans','Liberation Sans',sans-serif;line-height:12px;top:233.5px;left:353.8px;transform-origin:0 50%;transform:scaleX(1.0054);">Выравнивание</span>
<div class="a" style="left:425.5px;top:231px;width:45.0px;height:15px;border:1px solid #999ca3;border-bottom:none;background:linear-gradient(#f2f2f2 0%,#ebebeb 50%,#dddddd 51%,#d2d2d2 100%)"></div>
<span class="t" style="font-size:8.2px;color:#111;font-family:'DejaVu Sans','Liberation Sans',sans-serif;line-height:12px;top:233.5px;left:432.5px;transform-origin:0 50%;transform:scaleX(0.9824);">Шрифт</span>
<div class="a" style="left:471px;top:231px;width:49px;height:15px;border:1px solid #999ca3;border-bottom:none;background:linear-gradient(#f2f2f2 0%,#ebebeb 50%,#dddddd 51%,#d2d2d2 100%)"></div>
<span class="t" style="font-size:8.2px;color:#111;font-family:'DejaVu Sans','Liberation Sans',sans-serif;line-height:12px;top:233.5px;left:477.5px;transform-origin:0 50%;transform:scaleX(0.9730);">Граница</span>
<div class="a" style="left:520.8px;top:231px;width:48.0px;height:15px;border:1px solid #999ca3;border-bottom:none;background:linear-gradient(#f2f2f2 0%,#ebebeb 50%,#dddddd 51%,#d2d2d2 100%)"></div>
<span class="t" style="font-size:8.2px;color:#111;font-family:'DejaVu Sans','Liberation Sans',sans-serif;line-height:12px;top:233.5px;left:527.5px;transform-origin:0 50%;transform:scaleX(0.9829);">Заливка</span>
<div class="a" style="left:570px;top:231px;width:43px;height:15px;border:1px solid #999ca3;border-bottom:none;background:linear-gradient(#f2f2f2 0%,#ebebeb 50%,#dddddd 51%,#d2d2d2 100%)"></div>
<span class="t" style="font-size:8.2px;color:#111;font-family:'DejaVu Sans','Liberation Sans',sans-serif;line-height:12px;top:233.5px;left:575.5px;transform-origin:0 50%;transform:scaleX(0.9518);">Защита</span>
<div class="a" style="left:303px;top:229.5px;width:44.5px;height:17px;background:#fff;border:1px solid #999ca3;border-bottom:none"></div>
<span class="t" style="font-size:8.2px;color:#111;font-family:'DejaVu Sans','Liberation Sans',sans-serif;line-height:12px;top:233.2px;left:312.8px;transform-origin:0 50%;transform:scaleX(0.9616);">Число</span>
<span class="t" style="font-size:8.2px;color:#111;font-family:'DejaVu Sans','Liberation Sans',sans-serif;line-height:12px;top:253.7px;left:310px;transform-origin:0 50%;transform:scaleX(0.9883);">Числовые форматы:</span>
<div class="a" style="left:310.3px;top:264.4px;width:5.2px;height:0.8px;background:#222"></div>
<div class="a" style="left:310px;top:266px;width:110.5px;height:200px;background:#fff;border:1px solid #a6abb2"></div>
<div class="a" style="left:407px;top:267px;width:12.5px;height:198px;background:#f7f7f7"></div>
<svg style="left:410.5px;top:272.5px;" width="6" height="3.5" viewBox="0 0 6 3.5"><path d="M0 3.5L3 0L6 3.5Z" fill="#9aa0a8"/></svg>
<svg style="left:410.5px;top:456.5px;" width="6" height="3.5" viewBox="0 0 6 3.5"><path d="M0 0L3 3.5L6 0Z" fill="#9aa0a8"/></svg>
<div class="a" style="left:312px;top:383px;width:93.5px;height:9.8px;background:#3399ff"></div>
<span class="t" style="font-size:8.2px;color:#111;font-family:'DejaVu Sans','Liberation Sans',sans-serif;line-height:12px;top:267.6px;left:313.8px;transform-origin:0 50%;transform:scaleX(1.0449);">Общий</span>
<span class="t" style="font-size:8.2px;color:#111;font-family:'DejaVu Sans','Liberation Sans',sans-serif;line-height:12px;top:278.0px;left:313.8px;transform-origin:0 50%;transform:scaleX(1.0087);">Числовой</span>
<span class="t" style="font-size:8.2px;color:#111;font-family:'DejaVu Sans','Liberation Sans',sans-serif;line-height:12px;top:288.4px;left:313.8px;transform-origin:0 50%;transform:scaleX(0.9969);">Денежный</span>
<span class="t" style="font-size:8.2px;color:#111;font-family:'DejaVu Sans','Liberation Sans',sans-serif;line-height:12px;top:298.8px;left:313.8px;transform-origin:0 50%;transform:scaleX(0.9812);">Финансовый</span>
<span class="t" style="font-size:8.2px;color:#111;font-family:'DejaVu Sans','Liberation Sans',sans-serif;line-height:12px;top:309.2px;left:313.8px;transform-origin:0 50%;transform:scaleX(0.9055);">Дата</span>
<span class="t" style="font-size:8.2px;color:#111;font-family:'DejaVu Sans','Liberation Sans',sans-serif;line-height:12px;top:319.6px;left:313.8px;transform-origin:0 50%;transform:scaleX(0.9900);">Время</span>
<span class="t" style="font-size:8.2px;color:#111;font-family:'DejaVu Sans','Liberation Sans',sans-serif;line-height:12px;top:330.0px;left:313.8px;transform-origin:0 50%;transform:scaleX(1.0086);">Процентный</span>
<span class="t" style="font-size:8.2px;color:#111;font-family:'DejaVu Sans','Liberation Sans',sans-serif;line-height:12px;top:340.4px;left:313.8px;transform-origin:0 50%;transform:scaleX(1.0491);">Дробный</span>
<span class="t" style="font-size:8.2px;color:#111;font-family:'DejaVu Sans','Liberation Sans',sans-serif;line-height:12px;top:350.8px;left:313.8px;transform-origin:0 50%;transform:scaleX(0.9977);">Экспоненциальный</span>
<span class="t" style="font-size:8.2px;color:#111;font-family:'DejaVu Sans','Liberation Sans',sans-serif;line-height:12px;top:361.2px;left:313.8px;transform-origin:0 50%;transform:scaleX(0.9526);">Текстовый</span>
<span class="t" style="font-size:8.2px;color:#111;font-family:'DejaVu Sans','Liberation Sans',sans-serif;line-height:12px;top:371.6px;left:313.8px;transform-origin:0 50%;transform:scaleX(1.0002);">Дополнительный</span>
<span class="t" style="font-size:8.2px;color:#fff;font-family:'DejaVu Sans','Liberation Sans',sans-serif;line-height:12px;top:382.0px;left:313.8px;transform-origin:0 50%;transform:scaleX(0.9556);">(все форматы)</span>
<div class="a" style="left:428.5px;top:272px;width:367px;height:24.5px;border:1px solid #dcdcdc;border-radius:2px"></div>
<div class="a" style="left:431.5px;top:268px;width:41px;height:9px;background:#fff"></div>
<span class="t" style="font-size:8.2px;color:#111;font-family:'DejaVu Sans','Liberation Sans',sans-serif;line-height:12px;top:266.3px;left:433px;transform-origin:0 50%;transform:scaleX(1.0308);">Образец</span>
<span class="t" style="font-size:8.2px;color:#111;font-family:'DejaVu Sans','Liberation Sans',sans-serif;line-height:12px;top:282.0px;left:435px;transform-origin:0 50%;transform:scaleX(0.9234);">01.07.2016</span>
<span class="t" style="font-size:8.2px;color:#111;font-family:'DejaVu Sans','Liberation Sans',sans-serif;line-height:12px;top:300.8px;left:428.3px;transform-origin:0 50%;transform:scaleX(0.9058);">Тип:</span>
<div class="a" style="left:432.6px;top:311.3px;width:5px;height:0.8px;background:#222"></div>
<div class="a" style="left:427.6px;top:314.3px;width:368.7px;height:15.5px;background:#fff;border:1px solid #b4b8be;border-top-color:#8e939b"></div>
<span class="t" style="font-size:8.2px;color:#111;font-family:'DejaVu Sans','Liberation Sans',sans-serif;line-height:12px;top:316.4px;left:430.8px;transform-origin:0 50%;transform:scaleX(0.9442);">ДД.ММ.ГГГГ</span>
<div class="a" style="left:427.6px;top:330.3px;width:368.7px;height:117px;background:#fff;border:1px solid #a4a9b0;border-top-color:#70757d"></div>
<div class="a" style="left:782.5px;top:331.3px;width:12.8px;height:115px;background:#f5f5f5"></div>
<svg style="left:785.7px;top:336.5px;" width="6" height="3.5" viewBox="0 0 6 3.5"><path d="M0 3.5L3 0L6 3.5Z" fill="#555"/></svg>
<svg style="left:785.7px;top:436.5px;" width="6" height="3.5" viewBox="0 0 6 3.5"><path d="M0 0L3 3.5L6 0Z" fill="#555"/></svg>
<div class="a" style="left:782.8px;top:374.5px;width:11.8px;height:23px;border:1px solid #979797;border-radius:2px;background:linear-gradient(90deg,#f3f3f3,#dcdcdc)"></div>
<div class="a" style="left:786px;top:383.4px;width:5.5px;height:0.9px;background:#666"></div>
<div class="a" style="left:786px;top:385.4px;width:5.5px;height:0.9px;background:#666"></div>
<div class="a" style="left:786px;top:387.4px;width:5.5px;height:0.9px;background:#666"></div>
<div class="a" style="left:430px;top:393.4px;width:352px;height:10.3px;background:#3399ff"></div>
<span class="t" style="font-size:8.2px;color:#111;font-family:'DejaVu Sans','Liberation Sans',sans-serif;line-height:12px;top:331.0px;left:431px;transform-origin:0 50%;transform:scaleX(0.9231);">0%</span>
<span class="t" style="font-size:8.2px;color:#111;font-family:'DejaVu Sans','Liberation Sans',sans-serif;line-height:12px;top:341.37px;left:431px;transform-origin:0 50%;transform:scaleX(0.9417);">0,00%</span>
<span class="t" style="font-size:8.2px;color:#111;font-family:'DejaVu Sans','Liberation Sans',sans-serif;line-height:12px;top:351.74px;left:431px;transform-origin:0 50%;transform:scaleX(0.9217);">0,00E+00</span>
<span class="t" style="font-size:8.2px;color:#111;font-family:'DejaVu Sans','Liberation Sans',sans-serif;line-height:12px;top:362.11px;left:431px;transform-origin:0 50%;transform:scaleX(0.8980);">##0,0E+0</span>
<span class="t" style="font-size:8.2px;color:#111;font-family:'DejaVu Sans','Liberation Sans',sans-serif;line-height:12px;top:372.48px;left:431px;transform-origin:0 50%;transform:scaleX(0.8962);">#" "?/?</span>
<span class="t" style="font-size:8.2px;color:#111;font-family:'DejaVu Sans','Liberation Sans',sans-serif;line-height:12px;top:382.85px;left:431px;transform-origin:0 50%;transform:scaleX(0.9154);">#" "??/??</span>
<span class="t" style="font-size:8.2px;color:#fff;font-family:'DejaVu Sans','Liberation Sans',sans-serif;line-height:12px;top:393.22px;left:431px;transform-origin:0 50%;transform:scaleX(0.9403);">ДД.ММ.ГГГГ</span>
<span class="t" style="font-size:8.2px;color:#111;font-family:'DejaVu Sans','Liberation Sans',sans-serif;line-height:12px;top:403.59px;left:431px;transform-origin:0 50%;transform:scaleX(1.0165);">ДД.МММ.ГГ</span>
<span class="t" style="font-size:8.2px;color:#111;font-family:'DejaVu Sans','Liberation Sans',sans-serif;line-height:12px;top:413.96px;left:431px;transform-origin:0 50%;transform:scaleX(1.0794);">ДД.МММ</span>
<span class="t" style="font-size:8.2px;color:#111;font-family:'DejaVu Sans','Liberation Sans',sans-serif;line-height:12px;top:424.33px;left:431px;transform-origin:0 50%;transform:scaleX(1.0060);">МММ.ГГ</span>
<span class="t" style="font-size:8.2px;color:#111;font-family:'DejaVu Sans','Liberation Sans',sans-serif;line-height:12px;top:434.7px;left:431px;transform-origin:0 50%;transform:scaleX(1.0603);">ч:мм AM/PM</span>
<div class="a" style="left:737px;top:452px;width:58.5px;height:17.5px;border:1px solid #bcc0c3;border-radius:2px;background:#f4f4f4"></div>
<span class="t" style="font-size:8.2px;color:#a0a0a0;font-family:'DejaVu Sans','Liberation Sans',sans-serif;line-height:12px;top:455.0px;left:766.3px;transform-origin:50% 50%;transform:translateX(-50%) scaleX(0.9350);">Удалить</span>
<span class="t" style="font-size:8.2px;color:#111;font-family:'DejaVu Sans','Liberation Sans',sans-serif;line-height:12px;top:479.0px;left:310.5px;transform-origin:0 50%;transform:scaleX(0.9763);">Введите код числового формата, используя один из существующих кодов в качестве образца.</span>
<div class="a" style="left:677px;top:545.5px;width:59px;height:17.5px;border:1px solid #3c7fb1;border-radius:2.5px;box-shadow:inset 0 0 0 1px #48d8fb66,inset 0 0 0 1.6px #b8e8f8;background:linear-gradient(#f2f2f2 0%,#ebebeb 48%,#dddddd 52%,#cfcfcf 100%)"></div>
<span class="t" style="font-size:8.2px;color:#111;font-family:'DejaVu Sans','Liberation Sans',sans-serif;line-height:12px;top:548.3px;left:706.5px;transform-origin:50% 50%;transform:translateX(-50%) scaleX(0.9723);">OK</span>
<div class="a" style="left:744.4px;top:545.5px;width:58px;height:17.5px;border:1px solid #707070;border-radius:2.5px;box-shadow:inset 0 0 0 1px #fcfcfc;background:linear-gradient(#f2f2f2 0%,#ebebeb 48%,#dddddd 52%,#cfcfcf 100%)"></div>
<span class="t" style="font-size:8.2px;color:#111;font-family:'DejaVu Sans','Liberation Sans',sans-serif;line-height:12px;top:548.3px;left:773.5px;transform-origin:50% 50%;transform:translateX(-50%) scaleX(0.9752);">Отмена</span>
<svg style="left:331.3px;top:385.5px;" width="10" height="16" viewBox="0 0 10 16"><path d="M0.5 0.5V12.5L3.4 9.9L5.6 15L7.6 14.1L5.4 9.2H9.3Z" fill="#fff" stroke="#000" stroke-width="0.9" stroke-linejoin="round"/></svg>
</body></html>
